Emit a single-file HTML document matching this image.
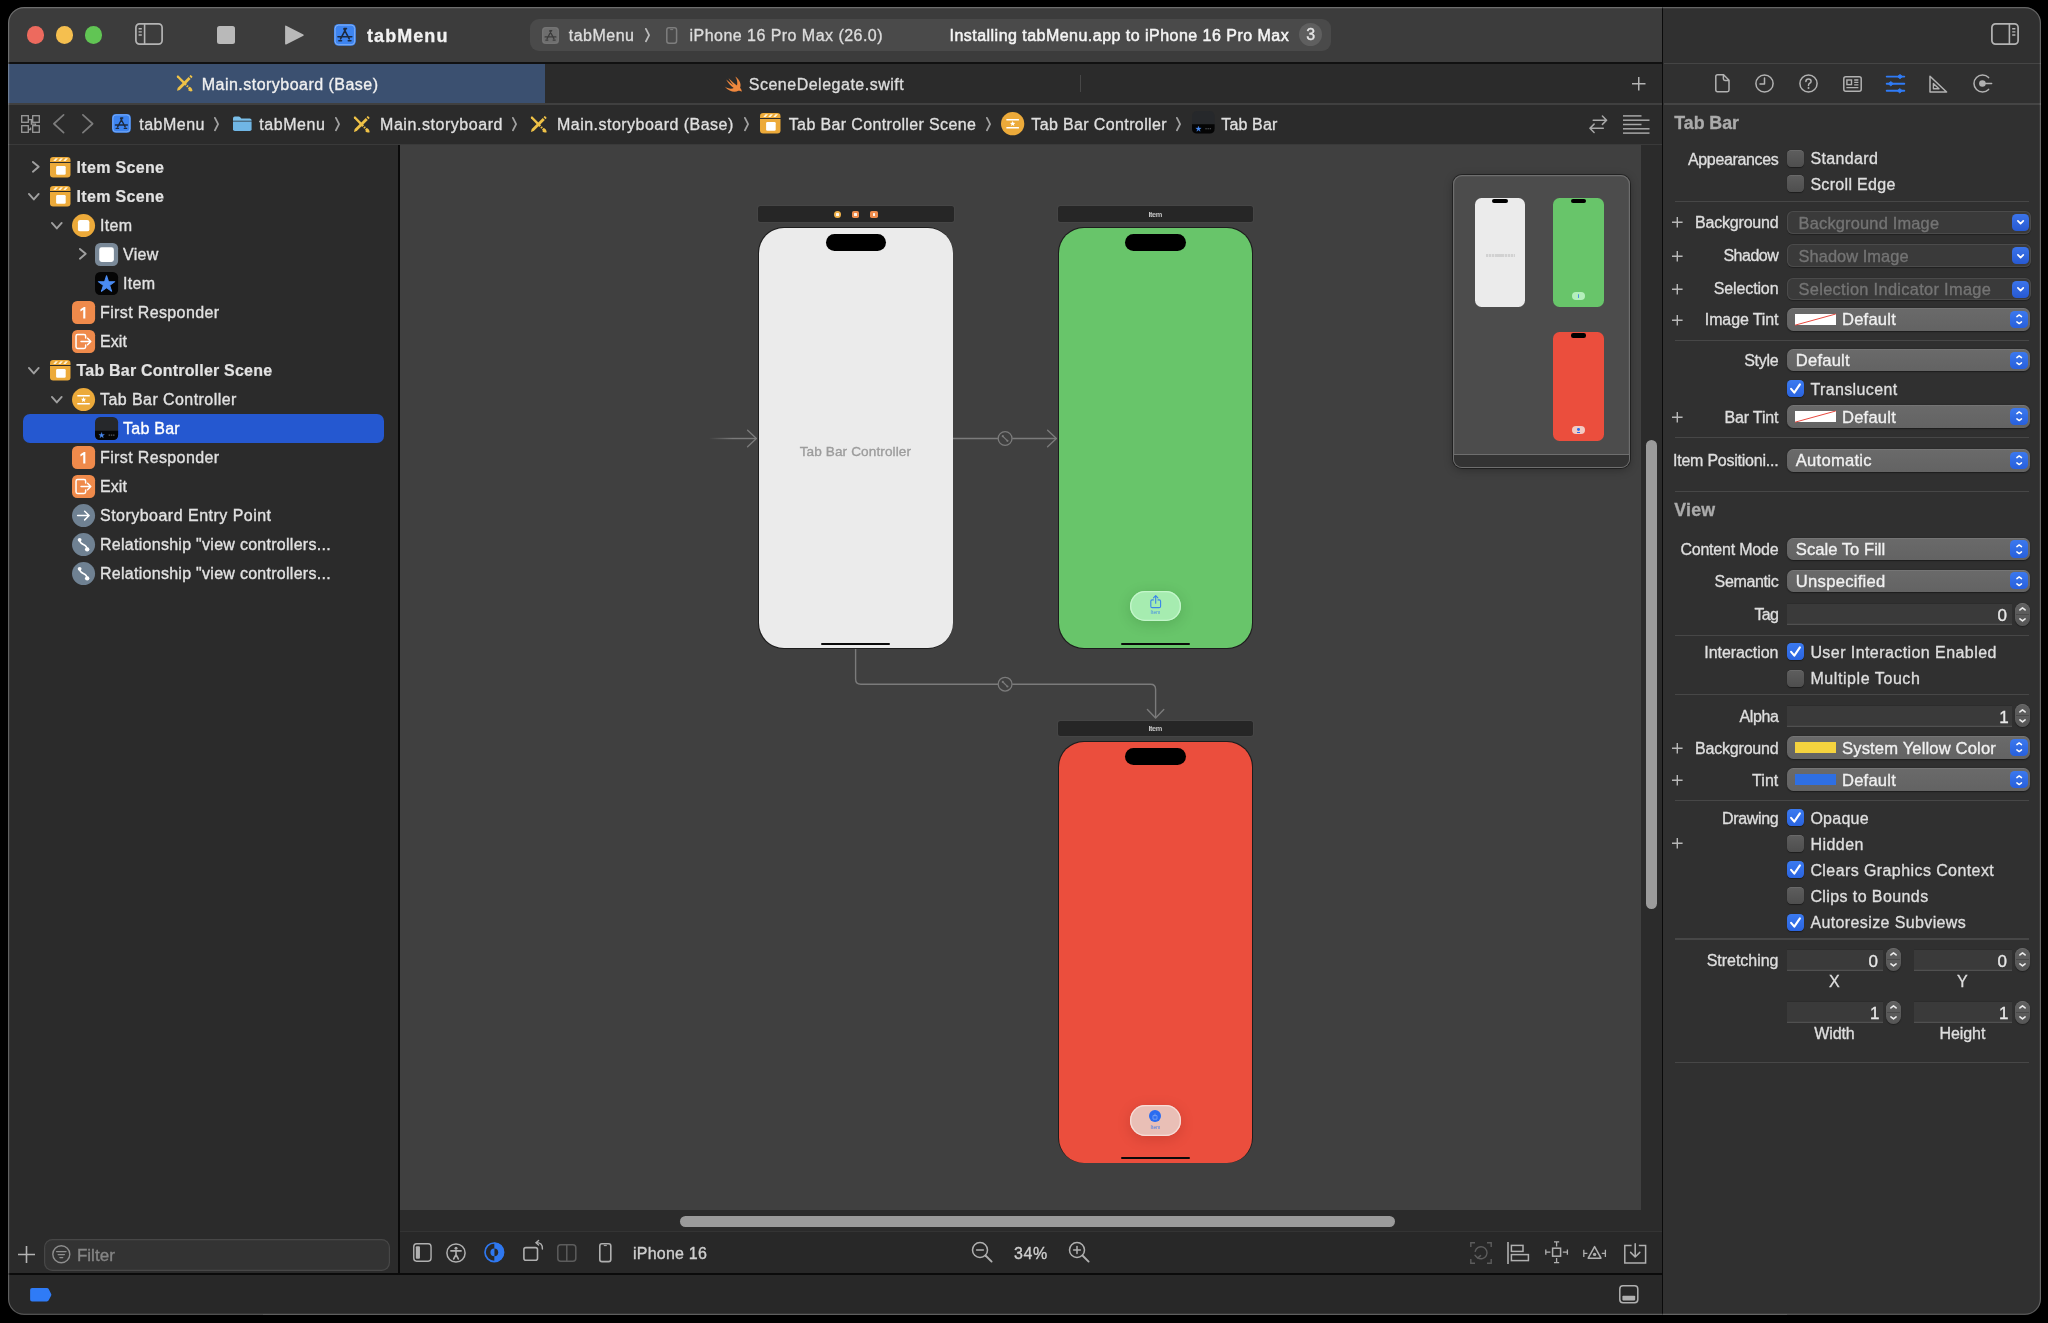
<!DOCTYPE html>
<html><head><meta charset="utf-8"><title>tabMenu — Main.storyboard</title><style>
html,body{margin:0;padding:0;background:#000;}
body{width:2048px;height:1323px;overflow:hidden;position:relative;font-family:"Liberation Sans", sans-serif;}
#win{position:absolute;left:0;top:0;width:2048px;height:1323px;clip-path:inset(7px 7px 8.5px 8px round 16px);will-change:transform;}
.t{position:absolute;white-space:pre;line-height:1;font-family:"Liberation Sans", sans-serif;-webkit-font-smoothing:antialiased;}
svg{position:absolute;overflow:visible;}
</style></head><body>
<div id="win">
<div style="position:absolute;left:0.00px;top:0.00px;width:2048.00px;height:1323.00px;background:#2a2a2a;"></div>
<div style="position:absolute;left:8.00px;top:7.00px;width:1654.00px;height:56.00px;background:#3c3c3c;"></div>
<div style="position:absolute;left:8.00px;top:62.00px;width:1654.00px;height:2.00px;background:#111;"></div>
<div style="position:absolute;left:8.00px;top:64.00px;width:1654.00px;height:39.20px;background:#2b2b2b;"></div>
<div style="position:absolute;left:8.00px;top:64.00px;width:536.50px;height:39.20px;background:#3b5070;"></div>
<div style="position:absolute;left:8.00px;top:103.10px;width:1654.00px;height:1.60px;background:#404040;"></div>
<div style="position:absolute;left:8.00px;top:104.70px;width:1654.00px;height:39.30px;background:#2b2b2b;"></div>
<div style="position:absolute;left:8.00px;top:143.50px;width:1654.00px;height:1.50px;background:#3a3a3a;"></div>
<div style="position:absolute;left:8.00px;top:145.00px;width:391.00px;height:1129.00px;background:#2b2b2b;"></div>
<div style="position:absolute;left:398.20px;top:145.00px;width:1.80px;height:1129.00px;background:#0a0a0a;"></div>
<div style="position:absolute;left:400.00px;top:145.00px;width:1241.00px;height:1065.00px;background:#404040;"></div>
<div style="position:absolute;left:1641.00px;top:145.00px;width:21.00px;height:1087.00px;background:#2b2b2b;"></div>
<div style="position:absolute;left:400.00px;top:1210.00px;width:1262.00px;height:22.00px;background:#2b2b2b;"></div>
<div style="position:absolute;left:400.00px;top:1232.00px;width:1262.00px;height:41.50px;background:#282828;"></div>
<div style="position:absolute;left:400.00px;top:1231.00px;width:1262.00px;height:1.20px;background:#343434;"></div>
<div style="position:absolute;left:8.00px;top:1273.10px;width:1654.00px;height:1.60px;background:#0b0b0b;"></div>
<div style="position:absolute;left:8.00px;top:1274.50px;width:1654.00px;height:41.00px;background:#282828;"></div>
<div style="position:absolute;left:1661.90px;top:7.00px;width:1.50px;height:1310.00px;background:#0a0a0a;"></div>
<div style="position:absolute;left:1663.40px;top:7.00px;width:380.00px;height:1310.00px;background:#303030;"></div>
<div style="position:absolute;left:1663.80px;top:63.00px;width:380.00px;height:1.20px;background:#454545;"></div>
<div style="position:absolute;left:1663.80px;top:103.00px;width:380.00px;height:1.50px;background:#454545;"></div>
<div style="position:absolute;left:26.80px;top:25.95px;width:17.60px;height:17.60px;border-radius:50%;background:#ed6a5e;"></div>
<div style="position:absolute;left:55.80px;top:25.95px;width:17.60px;height:17.60px;border-radius:50%;background:#f5bf4f;"></div>
<div style="position:absolute;left:84.80px;top:25.95px;width:17.60px;height:17.60px;border-radius:50%;background:#61c554;"></div>
<svg style="left:135.00px;top:23.20px" width="28.00" height="22.00" viewBox="0 0 28 22" ><rect x="0.9" y="0.9" width="26.2" height="20.2" rx="3.6" fill="none" stroke="#b4b4b4" stroke-width="1.7"/><path d="M9.6 1 V21" stroke="#b4b4b4" stroke-width="1.6"/><path d="M3.6 5.8 H6.8 M3.6 8.9 H6.8 M3.6 12 H6.8" stroke="#b4b4b4" stroke-width="1.4"/></svg>
<div style="position:absolute;left:217.00px;top:26.00px;width:18.00px;height:18.00px;background:#b9b9b9;border-radius:2.5px;"></div>
<svg style="left:284.50px;top:24.70px" width="19.50" height="20.20" viewBox="0 0 19.5 20.2" ><path d="M0.1 1.4 Q0.1 0.2 1.2 0.8 L18.4 9.4 Q19.2 10.1 18.4 10.8 L1.2 19.4 Q0.1 20 0.1 18.8 Z" fill="#b9b9b9"/></svg>
<svg style="left:334.00px;top:24.00px" width="21.80" height="21.80" viewBox="0 0 22 22" ><rect x="0" y="0" width="22" height="22" rx="4.6" fill="#3d84f0"/><rect x="1.1" y="1.1" width="19.8" height="19.8" rx="3.6" fill="none" stroke="#8bb7f7" stroke-width="0.9"/><path d="M12 5 L6.6 15 M10 5 L15.4 15 M10.2 4.6 H12.6 M4 12.9 H18 M4.9 16.9 H7.6 M14.4 16.9 H17.1" fill="none" stroke="#1d2a3f" stroke-width="1.6" stroke-linecap="round"/></svg>
<span class="t" style="top:26.96px;font-size:18px;font-weight:700;color:#f2f2f2;letter-spacing:1.071px;-webkit-text-stroke:0.3px currentColor;left:367.00px;">tabMenu</span>
<div style="position:absolute;left:529.50px;top:18.75px;width:801.00px;height:32.50px;background:#4a4a4a;border-radius:9px;"></div>
<svg style="left:542.00px;top:27.00px" width="17.00" height="17.00" viewBox="0 0 22 22" ><rect x="0" y="0" width="22" height="22" rx="4.6" fill="#6e6e6e"/><rect x="1.1" y="1.1" width="19.8" height="19.8" rx="3.6" fill="none" stroke="#7c7c7c" stroke-width="0.9"/><path d="M12 5 L6.6 15 M10 5 L15.4 15 M10.2 4.6 H12.6 M4 12.9 H18 M4.9 16.9 H7.6 M14.4 16.9 H17.1" fill="none" stroke="#3c3c3c" stroke-width="1.6" stroke-linecap="round"/></svg>
<span class="t" style="top:28.23px;font-size:16px;font-weight:400;color:#dcdcdc;letter-spacing:0.498px;-webkit-text-stroke:0.34px currentColor;left:568.75px;">tabMenu</span>
<svg style="left:644.50px;top:28.20px" width="5.00" height="14.20" viewBox="0 0 5 14.2" ><path d="M0.9 0.9 L4.1 7.1 L0.9 13.299999999999999" fill="none" stroke="#bdbdbd" stroke-width="1.8" stroke-linecap="round" stroke-linejoin="round"/></svg>
<svg style="left:666.20px;top:27.00px" width="11.40" height="17.00" viewBox="0 0 11.4 17" ><rect x="0.8" y="0.8" width="9.8" height="15.4" rx="2.2" fill="none" stroke="#7e7e7e" stroke-width="1.5"/><path d="M4.2 2.6 H7.2" stroke="#7e7e7e" stroke-width="1"/></svg>
<span class="t" style="top:28.23px;font-size:16px;font-weight:400;color:#dcdcdc;letter-spacing:0.465px;-webkit-text-stroke:0.34px currentColor;left:689.50px;">iPhone 16 Pro Max (26.0)</span>
<span class="t" style="top:28.23px;font-size:16px;font-weight:400;color:#f4f4f4;letter-spacing:0.472px;-webkit-text-stroke:0.5px currentColor;left:949.50px;">Installing tabMenu.app to iPhone 16 Pro Max</span>
<div style="position:absolute;left:1299.00px;top:23.00px;width:23.00px;height:23.00px;background:#5f5f5f;border-radius:50%;"></div>
<span class="t" style="top:26.93px;font-size:16px;font-weight:400;color:#e6e6e6;letter-spacing:-0.006px;-webkit-text-stroke:0.34px currentColor;left:1306.25px;">3</span>
<svg style="left:1990.70px;top:23.20px" width="28.00" height="22.00" viewBox="0 0 28 22" ><rect x="0.9" y="0.9" width="26.2" height="20.2" rx="3.6" fill="none" stroke="#b4b4b4" stroke-width="1.7"/><path d="M18.4 1 V21" stroke="#b4b4b4" stroke-width="1.6"/><path d="M21.2 5.8 H24.4 M21.2 8.9 H24.4 M21.2 12 H24.4" stroke="#b4b4b4" stroke-width="1.4"/></svg>
<svg style="left:175.90px;top:75.40px" width="16.60" height="16.60" viewBox="0 0 17 17" ><path d="M1 16.2 L1.7 13.2 L12.9 2 L15 4.1 L3.8 15.3 Z" fill="#efc247"/><path d="M13.7 1.2 L14.6 0.3 Q15.1 -0.1 15.6 0.4 L16.6 1.4 Q17.1 1.9 16.6 2.4 L15.8 3.3 Z" fill="#efc247"/><path d="M1.2 0.7 Q1.9 0 2.7 0.7 L11.2 9.3 L9.4 11.1 L1 2.3 Q0.4 1.5 1.2 0.7 Z" fill="#efc247"/><path d="M10.4 11.9 L12 10.3 L13 11.3 L11.4 12.9 Z" fill="#efc247"/><path d="M12.2 13.6 L13.7 12.1 Q16.6 13 16.9 16.4 Q14.9 17.4 12.6 16 Q13.6 15.2 12.2 13.6 Z" fill="#efc247"/></svg>
<span class="t" style="top:76.63px;font-size:16px;font-weight:400;color:#f0f0f0;letter-spacing:0.475px;-webkit-text-stroke:0.34px currentColor;left:201.75px;">Main.storyboard (Base)</span>
<svg style="left:723.60px;top:75.60px" width="18.60" height="16.53" viewBox="0 0 18 16" ><path d="M10.9 0.6 C15.6 3.6 16.9 8.6 15.6 11.4 C16.9 12.9 17.5 14.6 16.9 15.3 C16 14.2 14.9 14 13.9 14.4 C10.6 16.2 5.3 15.6 0.6 10.2 C3.6 12.2 6.9 12.9 9.4 11.7 C6.4 9.4 3.9 6.6 2.1 3.4 C4.5 5.6 6.9 7.4 9.2 8.9 C7.2 6.7 5.6 4.4 4.4 2.2 C7.3 5 10 7.4 12.6 9.2 C13.3 6.6 12.8 3.4 10.9 0.6 Z" fill="#f0883e"/></svg>
<span class="t" style="top:76.63px;font-size:16px;font-weight:400;color:#dcdcdc;letter-spacing:0.507px;-webkit-text-stroke:0.34px currentColor;left:748.75px;">SceneDelegate.swift</span>
<div style="position:absolute;left:1079.60px;top:75.00px;width:1.20px;height:16.50px;background:#474747;"></div>
<svg style="left:1631.75px;top:76.75px" width="13.50" height="13.50" viewBox="0 0 13.5 13.5" ><path d="M6.75 0 V13.5 M0 6.75 H13.5" fill="none" stroke="#b4b4b4" stroke-width="1.5"/></svg>
<svg style="left:21.00px;top:115.00px" width="19.00" height="18.00" viewBox="0 0 19 18" ><g fill="none" stroke="#9a9a9a" stroke-width="1.3"><rect x="0.7" y="0.7" width="6.6" height="6.6"/><rect x="11.7" y="0.7" width="6.6" height="6.6"/><rect x="0.7" y="10.7" width="6.6" height="6.6"/><rect x="11.7" y="10.7" width="6.6" height="6.6"/><path d="M7.3 4.6 H10.4 V9.2 H14.5 V10.7 M11.7 4.6 H9.6 M7.3 14.5 H9.6 V12.4"/></g></svg>
<svg style="left:52.75px;top:114.25px" width="11.50" height="19.50" viewBox="0 0 11.5 19.5" ><path d="M10.6 0.9 L0.9 9.75 L10.6 18.6" fill="none" stroke="#7c7c7c" stroke-width="1.7" stroke-linecap="round" stroke-linejoin="round"/></svg>
<svg style="left:82.25px;top:114.25px" width="11.50" height="19.50" viewBox="0 0 11.5 19.5" ><path d="M0.9 0.9 L10.6 9.75 L0.9 18.6" fill="none" stroke="#7c7c7c" stroke-width="1.7" stroke-linecap="round" stroke-linejoin="round"/></svg>
<svg style="left:111.75px;top:114.40px" width="18.80" height="18.80" viewBox="0 0 22 22" ><rect x="0" y="0" width="22" height="22" rx="4.6" fill="#3d84f0"/><rect x="1.1" y="1.1" width="19.8" height="19.8" rx="3.6" fill="none" stroke="#8bb7f7" stroke-width="0.9"/><path d="M12 5 L6.6 15 M10 5 L15.4 15 M10.2 4.6 H12.6 M4 12.9 H18 M4.9 16.9 H7.6 M14.4 16.9 H17.1" fill="none" stroke="#1d2a3f" stroke-width="1.6" stroke-linecap="round"/></svg>
<span class="t" style="top:117.03px;font-size:16px;font-weight:400;color:#dfdfdf;letter-spacing:0.498px;-webkit-text-stroke:0.34px currentColor;left:139.25px;">tabMenu</span>
<svg style="left:214.20px;top:117.10px" width="5.00" height="14.20" viewBox="0 0 5 14.2" ><path d="M0.9 0.9 L4.1 7.1 L0.9 13.299999999999999" fill="none" stroke="#a2a2a2" stroke-width="1.8" stroke-linecap="round" stroke-linejoin="round"/></svg>
<svg style="left:232.50px;top:116.20px" width="18.60" height="15.08" viewBox="0 0 18.5 15" ><path d="M0 2.4 Q0 0.6 1.8 0.6 H5.6 Q6.6 0.6 7.2 1.3 L8.2 2.4 H16.6 Q18.5 2.4 18.5 4.2 V4.7 H0 Z" fill="#7abfea"/><path d="M0 5.5 H18.5 V13.2 Q18.5 15 16.7 15 H1.8 Q0 15 0 13.2 Z" fill="#70b6e5"/></svg>
<span class="t" style="top:117.03px;font-size:16px;font-weight:400;color:#dfdfdf;letter-spacing:0.569px;-webkit-text-stroke:0.34px currentColor;left:259.25px;">tabMenu</span>
<svg style="left:335.30px;top:117.10px" width="5.00" height="14.20" viewBox="0 0 5 14.2" ><path d="M0.9 0.9 L4.1 7.1 L0.9 13.299999999999999" fill="none" stroke="#a2a2a2" stroke-width="1.8" stroke-linecap="round" stroke-linejoin="round"/></svg>
<svg style="left:352.90px;top:115.60px" width="16.80" height="16.80" viewBox="0 0 17 17" ><path d="M1 16.2 L1.7 13.2 L12.9 2 L15 4.1 L3.8 15.3 Z" fill="#efc247"/><path d="M13.7 1.2 L14.6 0.3 Q15.1 -0.1 15.6 0.4 L16.6 1.4 Q17.1 1.9 16.6 2.4 L15.8 3.3 Z" fill="#efc247"/><path d="M1.2 0.7 Q1.9 0 2.7 0.7 L11.2 9.3 L9.4 11.1 L1 2.3 Q0.4 1.5 1.2 0.7 Z" fill="#efc247"/><path d="M10.4 11.9 L12 10.3 L13 11.3 L11.4 12.9 Z" fill="#efc247"/><path d="M12.2 13.6 L13.7 12.1 Q16.6 13 16.9 16.4 Q14.9 17.4 12.6 16 Q13.6 15.2 12.2 13.6 Z" fill="#efc247"/></svg>
<span class="t" style="top:117.03px;font-size:16px;font-weight:400;color:#dfdfdf;letter-spacing:0.552px;-webkit-text-stroke:0.34px currentColor;left:380.00px;">Main.storyboard</span>
<svg style="left:512.40px;top:117.10px" width="5.00" height="14.20" viewBox="0 0 5 14.2" ><path d="M0.9 0.9 L4.1 7.1 L0.9 13.299999999999999" fill="none" stroke="#a2a2a2" stroke-width="1.8" stroke-linecap="round" stroke-linejoin="round"/></svg>
<svg style="left:529.90px;top:115.60px" width="16.80" height="16.80" viewBox="0 0 17 17" ><path d="M1 16.2 L1.7 13.2 L12.9 2 L15 4.1 L3.8 15.3 Z" fill="#efc247"/><path d="M13.7 1.2 L14.6 0.3 Q15.1 -0.1 15.6 0.4 L16.6 1.4 Q17.1 1.9 16.6 2.4 L15.8 3.3 Z" fill="#efc247"/><path d="M1.2 0.7 Q1.9 0 2.7 0.7 L11.2 9.3 L9.4 11.1 L1 2.3 Q0.4 1.5 1.2 0.7 Z" fill="#efc247"/><path d="M10.4 11.9 L12 10.3 L13 11.3 L11.4 12.9 Z" fill="#efc247"/><path d="M12.2 13.6 L13.7 12.1 Q16.6 13 16.9 16.4 Q14.9 17.4 12.6 16 Q13.6 15.2 12.2 13.6 Z" fill="#efc247"/></svg>
<span class="t" style="top:117.03px;font-size:16px;font-weight:400;color:#dfdfdf;letter-spacing:0.475px;-webkit-text-stroke:0.34px currentColor;left:557.00px;">Main.storyboard (Base)</span>
<svg style="left:743.70px;top:117.10px" width="5.00" height="14.20" viewBox="0 0 5 14.2" ><path d="M0.9 0.9 L4.1 7.1 L0.9 13.299999999999999" fill="none" stroke="#a2a2a2" stroke-width="1.8" stroke-linecap="round" stroke-linejoin="round"/></svg>
<svg style="left:760.00px;top:113.30px" width="20.50" height="20.40" viewBox="0 0 20.5 20.4" ><path d="M0 3.2 Q0 0 3.2 0 H17.3 Q20.5 0 20.5 3.2 V5 H0 Z" fill="#ecaa3a"/><path d="M0 6.1 H20.5 V17.2 Q20.5 20.4 17.3 20.4 H3.2 Q0 20.4 0 17.2 Z" fill="#ecaa3a"/><path d="M3.2 4 L5.6 1.3 H8 L5.6 4 Z M8.2 4 L10.6 1.3 H13 L10.6 4 Z M13.2 4 L15.6 1.3 H18 L15.6 4 Z" fill="#fff4d8"/><rect x="6.1" y="8.9" width="9.6" height="8.9" rx="1.3" fill="#fff"/></svg>
<span class="t" style="top:117.03px;font-size:16px;font-weight:400;color:#dfdfdf;letter-spacing:0.364px;-webkit-text-stroke:0.34px currentColor;left:788.75px;">Tab Bar Controller Scene</span>
<svg style="left:986.20px;top:117.10px" width="5.00" height="14.20" viewBox="0 0 5 14.2" ><path d="M0.9 0.9 L4.1 7.1 L0.9 13.299999999999999" fill="none" stroke="#a2a2a2" stroke-width="1.8" stroke-linecap="round" stroke-linejoin="round"/></svg>
<svg style="left:1001.20px;top:112.30px" width="23.30" height="23.30" viewBox="0 0 23 23" ><circle cx="11.5" cy="11.5" r="11.5" fill="#ecaa3a"/><path d="M5.3 7.6 H17.7 M5.3 15.6 H17.7" stroke="#fff" stroke-width="1.5" fill="none"/><path d="M11.5 8.9 l0.75 1.75 1.9 0.15 -1.45 1.25 0.45 1.85 -1.65 -1 -1.65 1 0.45 -1.85 -1.45 -1.25 1.9 -0.15z" fill="#fff"/></svg>
<span class="t" style="top:117.03px;font-size:16px;font-weight:400;color:#dfdfdf;letter-spacing:0.378px;-webkit-text-stroke:0.34px currentColor;left:1031.25px;">Tab Bar Controller</span>
<svg style="left:1176.20px;top:117.10px" width="5.00" height="14.20" viewBox="0 0 5 14.2" ><path d="M0.9 0.9 L4.1 7.1 L0.9 13.299999999999999" fill="none" stroke="#a2a2a2" stroke-width="1.8" stroke-linecap="round" stroke-linejoin="round"/></svg>
<svg style="left:1192.00px;top:111.30px" width="22.60" height="22.60" viewBox="0 0 23 23" ><rect width="23" height="23" rx="5.2" fill="#26282b"/><path d="M0 13.6 H23 V17.8 Q23 23 17.8 23 H5.2 Q0 23 0 17.8 Z" fill="#050505"/><path transform="translate(6.6 18.3) scale(2.9)" d="M0 -1 L0.2245 -0.309 L0.951 -0.309 L0.363 0.118 L0.588 0.809 L0 0.382 L-0.588 0.809 L-0.363 0.118 L-0.951 -0.309 L-0.2245 -0.309 Z" fill="#4a8bf2" stroke="#4a8bf2" stroke-width="0.12" stroke-linejoin="round"/><path d="M13.6 18.1 H19.4" stroke="#5a5d62" stroke-width="1.2" stroke-dasharray="1.4 0.8" fill="none"/></svg>
<span class="t" style="top:117.03px;font-size:16px;font-weight:400;color:#dfdfdf;letter-spacing:0.158px;-webkit-text-stroke:0.34px currentColor;left:1221.25px;">Tab Bar</span>
<svg style="left:1589.00px;top:115.00px" width="18.50" height="18.50" viewBox="0 0 18.5 18.5" ><g fill="none" stroke="#a8a8a8" stroke-width="1.5" stroke-linecap="round" stroke-linejoin="round"><path d="M4.2 5.2 H17.4 M13.4 1 L17.6 5.2 L13.4 9.4"/><path d="M14.3 13.3 H1.1 M5.1 9.1 L0.9 13.3 L5.1 17.5"/></g></svg>
<svg style="left:1622.50px;top:114.60px" width="26.50" height="19.00" viewBox="0 0 26.5 19" ><path d="M0 0.9 H18.5" stroke="#a8a8a8" stroke-width="1.5"/><path d="M0 5.2 H26.5" stroke="#a8a8a8" stroke-width="1.5"/><path d="M0 9.5 H18.5" stroke="#a8a8a8" stroke-width="1.5"/><path d="M0 13.8 H26.5" stroke="#a8a8a8" stroke-width="1.5"/><path d="M0 18.1 H26.5" stroke="#a8a8a8" stroke-width="1.5"/></svg>
<div style="position:absolute;left:22.60px;top:414.00px;width:361.60px;height:28.70px;background:#2558d0;border-radius:7px;"></div>
<svg style="left:31.80px;top:161.20px" width="7.60" height="11.60" viewBox="0 0 7.6 11.6" ><path d="M0.9 0.9 L6.699999999999999 5.8 L0.9 10.7" fill="none" stroke="#a0a0a0" stroke-width="1.9" stroke-linecap="round" stroke-linejoin="round"/></svg>
<svg style="left:49.90px;top:156.90px" width="20.50" height="20.40" viewBox="0 0 20.5 20.4" ><path d="M0 3.2 Q0 0 3.2 0 H17.3 Q20.5 0 20.5 3.2 V5 H0 Z" fill="#ecaa3a"/><path d="M0 6.1 H20.5 V17.2 Q20.5 20.4 17.3 20.4 H3.2 Q0 20.4 0 17.2 Z" fill="#ecaa3a"/><path d="M3.2 4 L5.6 1.3 H8 L5.6 4 Z M8.2 4 L10.6 1.3 H13 L10.6 4 Z M13.2 4 L15.6 1.3 H18 L15.6 4 Z" fill="#fff4d8"/><rect x="6.1" y="8.9" width="9.6" height="8.9" rx="1.3" fill="#fff"/></svg>
<span class="t" style="top:160.23px;font-size:16px;font-weight:700;color:#e2e2e2;letter-spacing:0.327px;-webkit-text-stroke:0.2px currentColor;left:76.50px;">Item Scene</span>
<svg style="left:28.40px;top:192.70px" width="11.60" height="7.40" viewBox="0 0 11.6 7.4" ><path d="M0.9 0.9 L5.8 6.5 L10.7 0.9" fill="none" stroke="#a0a0a0" stroke-width="1.9" stroke-linecap="round" stroke-linejoin="round"/></svg>
<svg style="left:49.90px;top:185.90px" width="20.50" height="20.40" viewBox="0 0 20.5 20.4" ><path d="M0 3.2 Q0 0 3.2 0 H17.3 Q20.5 0 20.5 3.2 V5 H0 Z" fill="#ecaa3a"/><path d="M0 6.1 H20.5 V17.2 Q20.5 20.4 17.3 20.4 H3.2 Q0 20.4 0 17.2 Z" fill="#ecaa3a"/><path d="M3.2 4 L5.6 1.3 H8 L5.6 4 Z M8.2 4 L10.6 1.3 H13 L10.6 4 Z M13.2 4 L15.6 1.3 H18 L15.6 4 Z" fill="#fff4d8"/><rect x="6.1" y="8.9" width="9.6" height="8.9" rx="1.3" fill="#fff"/></svg>
<span class="t" style="top:189.23px;font-size:16px;font-weight:700;color:#e2e2e2;letter-spacing:0.327px;-webkit-text-stroke:0.2px currentColor;left:76.50px;">Item Scene</span>
<svg style="left:51.00px;top:221.70px" width="11.60" height="7.40" viewBox="0 0 11.6 7.4" ><path d="M0.9 0.9 L5.8 6.5 L10.7 0.9" fill="none" stroke="#a0a0a0" stroke-width="1.9" stroke-linecap="round" stroke-linejoin="round"/></svg>
<svg style="left:72.00px;top:214.05px" width="23.10" height="23.10" viewBox="0 0 23 23" ><circle cx="11.5" cy="11.5" r="11.5" fill="#ecaa3a"/><rect x="5.9" y="5.9" width="11.4" height="11.4" rx="2.2" fill="#fff"/></svg>
<span class="t" style="top:218.23px;font-size:16px;font-weight:400;color:#e2e2e2;letter-spacing:0.319px;-webkit-text-stroke:0.34px currentColor;left:100.00px;">Item</span>
<svg style="left:79.10px;top:248.20px" width="7.60" height="11.60" viewBox="0 0 7.6 11.6" ><path d="M0.9 0.9 L6.699999999999999 5.8 L0.9 10.7" fill="none" stroke="#a0a0a0" stroke-width="1.9" stroke-linecap="round" stroke-linejoin="round"/></svg>
<svg style="left:95.00px;top:243.05px" width="23.10" height="23.10" viewBox="0 0 23 23" ><rect x="0" y="0" width="23" height="23" rx="5.2" fill="#7a8998"/><rect x="4.2" y="4.2" width="14.6" height="14.6" rx="2.4" fill="#fff"/></svg>
<span class="t" style="top:247.23px;font-size:16px;font-weight:400;color:#e2e2e2;letter-spacing:0.277px;-webkit-text-stroke:0.34px currentColor;left:123.00px;">View</span>
<svg style="left:95.00px;top:272.05px" width="23.10" height="23.10" viewBox="0 0 23 23" ><rect width="23" height="23" rx="5.2" fill="#050505"/><path transform="translate(11.5 12.3) scale(8.6)" d="M0 -1 L0.2245 -0.309 L0.951 -0.309 L0.363 0.118 L0.588 0.809 L0 0.382 L-0.588 0.809 L-0.363 0.118 L-0.951 -0.309 L-0.2245 -0.309 Z" fill="#4a8bf2" stroke="#4a8bf2" stroke-width="0.12" stroke-linejoin="round"/></svg>
<span class="t" style="top:276.23px;font-size:16px;font-weight:400;color:#e2e2e2;letter-spacing:0.319px;-webkit-text-stroke:0.34px currentColor;left:123.00px;">Item</span>
<svg style="left:72.00px;top:301.05px" width="23.10" height="23.10" viewBox="0 0 23 23" ><rect width="23" height="23" rx="5.2" fill="#ef8a4b"/><path d="M8.4 8.3 L11.9 5.9 H13.3 V17.4 H11.2 V8.6 L8.4 10.4 Z" fill="#fff"/></svg>
<span class="t" style="top:305.23px;font-size:16px;font-weight:400;color:#e2e2e2;letter-spacing:0.371px;-webkit-text-stroke:0.34px currentColor;left:100.00px;">First Responder</span>
<svg style="left:72.00px;top:330.05px" width="23.10" height="23.10" viewBox="0 0 23 23" ><rect width="23" height="23" rx="5.2" fill="#ef8a4b"/><path d="M13.6 8 V6.2 Q13.6 4.6 12 4.6 H5.6 Q4 4.6 4 6.2 V16.8 Q4 18.4 5.6 18.4 H12 Q13.6 18.4 13.6 16.8 V15" fill="none" stroke="#fff" stroke-width="1.5" stroke-linecap="round"/><path d="M9 11.5 H18.6 M15.5 8.3 L18.7 11.5 L15.5 14.7" fill="none" stroke="#fff" stroke-width="1.5" stroke-linecap="round" stroke-linejoin="round"/></svg>
<span class="t" style="top:334.23px;font-size:16px;font-weight:400;color:#e2e2e2;letter-spacing:0.057px;-webkit-text-stroke:0.34px currentColor;left:100.00px;">Exit</span>
<svg style="left:28.40px;top:366.70px" width="11.60" height="7.40" viewBox="0 0 11.6 7.4" ><path d="M0.9 0.9 L5.8 6.5 L10.7 0.9" fill="none" stroke="#a0a0a0" stroke-width="1.9" stroke-linecap="round" stroke-linejoin="round"/></svg>
<svg style="left:49.90px;top:359.90px" width="20.50" height="20.40" viewBox="0 0 20.5 20.4" ><path d="M0 3.2 Q0 0 3.2 0 H17.3 Q20.5 0 20.5 3.2 V5 H0 Z" fill="#ecaa3a"/><path d="M0 6.1 H20.5 V17.2 Q20.5 20.4 17.3 20.4 H3.2 Q0 20.4 0 17.2 Z" fill="#ecaa3a"/><path d="M3.2 4 L5.6 1.3 H8 L5.6 4 Z M8.2 4 L10.6 1.3 H13 L10.6 4 Z M13.2 4 L15.6 1.3 H18 L15.6 4 Z" fill="#fff4d8"/><rect x="6.1" y="8.9" width="9.6" height="8.9" rx="1.3" fill="#fff"/></svg>
<span class="t" style="top:363.23px;font-size:16px;font-weight:700;color:#e2e2e2;letter-spacing:0.204px;-webkit-text-stroke:0.2px currentColor;left:76.50px;">Tab Bar Controller Scene</span>
<svg style="left:51.00px;top:395.70px" width="11.60" height="7.40" viewBox="0 0 11.6 7.4" ><path d="M0.9 0.9 L5.8 6.5 L10.7 0.9" fill="none" stroke="#a0a0a0" stroke-width="1.9" stroke-linecap="round" stroke-linejoin="round"/></svg>
<svg style="left:72.00px;top:388.05px" width="23.10" height="23.10" viewBox="0 0 23 23" ><circle cx="11.5" cy="11.5" r="11.5" fill="#ecaa3a"/><path d="M5.3 7.6 H17.7 M5.3 15.6 H17.7" stroke="#fff" stroke-width="1.5" fill="none"/><path d="M11.5 8.9 l0.75 1.75 1.9 0.15 -1.45 1.25 0.45 1.85 -1.65 -1 -1.65 1 0.45 -1.85 -1.45 -1.25 1.9 -0.15z" fill="#fff"/></svg>
<span class="t" style="top:392.23px;font-size:16px;font-weight:400;color:#e2e2e2;letter-spacing:0.433px;-webkit-text-stroke:0.34px currentColor;left:100.00px;">Tab Bar Controller</span>
<svg style="left:95.00px;top:417.05px" width="23.10" height="23.10" viewBox="0 0 23 23" ><rect width="23" height="23" rx="5.2" fill="#26282b"/><path d="M0 13.6 H23 V17.8 Q23 23 17.8 23 H5.2 Q0 23 0 17.8 Z" fill="#050505"/><path transform="translate(6.6 18.3) scale(2.9)" d="M0 -1 L0.2245 -0.309 L0.951 -0.309 L0.363 0.118 L0.588 0.809 L0 0.382 L-0.588 0.809 L-0.363 0.118 L-0.951 -0.309 L-0.2245 -0.309 Z" fill="#4a8bf2" stroke="#4a8bf2" stroke-width="0.12" stroke-linejoin="round"/><path d="M13.6 18.1 H19.4" stroke="#5a5d62" stroke-width="1.2" stroke-dasharray="1.4 0.8" fill="none"/></svg>
<span class="t" style="top:421.23px;font-size:16px;font-weight:400;color:#ffffff;letter-spacing:0.251px;-webkit-text-stroke:0.34px currentColor;left:123.00px;">Tab Bar</span>
<svg style="left:72.00px;top:446.05px" width="23.10" height="23.10" viewBox="0 0 23 23" ><rect width="23" height="23" rx="5.2" fill="#ef8a4b"/><path d="M8.4 8.3 L11.9 5.9 H13.3 V17.4 H11.2 V8.6 L8.4 10.4 Z" fill="#fff"/></svg>
<span class="t" style="top:450.23px;font-size:16px;font-weight:400;color:#e2e2e2;letter-spacing:0.371px;-webkit-text-stroke:0.34px currentColor;left:100.00px;">First Responder</span>
<svg style="left:72.00px;top:475.05px" width="23.10" height="23.10" viewBox="0 0 23 23" ><rect width="23" height="23" rx="5.2" fill="#ef8a4b"/><path d="M13.6 8 V6.2 Q13.6 4.6 12 4.6 H5.6 Q4 4.6 4 6.2 V16.8 Q4 18.4 5.6 18.4 H12 Q13.6 18.4 13.6 16.8 V15" fill="none" stroke="#fff" stroke-width="1.5" stroke-linecap="round"/><path d="M9 11.5 H18.6 M15.5 8.3 L18.7 11.5 L15.5 14.7" fill="none" stroke="#fff" stroke-width="1.5" stroke-linecap="round" stroke-linejoin="round"/></svg>
<span class="t" style="top:479.23px;font-size:16px;font-weight:400;color:#e2e2e2;letter-spacing:0.057px;-webkit-text-stroke:0.34px currentColor;left:100.00px;">Exit</span>
<svg style="left:72.00px;top:504.05px" width="23.10" height="23.10" viewBox="0 0 23 23" ><circle cx="11.5" cy="11.5" r="11.5" fill="#6f8192"/><path d="M5.6 11.5 H16.8 M12.6 7.2 L17 11.5 L12.6 15.8" fill="none" stroke="#fff" stroke-width="1.5" stroke-linecap="round" stroke-linejoin="round"/></svg>
<span class="t" style="top:508.23px;font-size:16px;font-weight:400;color:#e2e2e2;letter-spacing:0.479px;-webkit-text-stroke:0.34px currentColor;left:100.00px;">Storyboard Entry Point</span>
<svg style="left:72.00px;top:533.05px" width="23.10" height="23.10" viewBox="0 0 23 23" ><circle cx="11.5" cy="11.5" r="11.5" fill="#6f8192"/><path d="M7.6 7 C7.6 12.6 15 10.4 15 16.2" fill="none" stroke="#fff" stroke-width="1.5"/><circle cx="7.6" cy="6.8" r="1.9" fill="#fff"/><circle cx="15.1" cy="16.3" r="2.2" fill="#fff"/></svg>
<span class="t" style="top:537.23px;font-size:16px;font-weight:400;color:#e2e2e2;letter-spacing:0.276px;-webkit-text-stroke:0.34px currentColor;left:100.00px;">Relationship "view controllers...</span>
<svg style="left:72.00px;top:562.05px" width="23.10" height="23.10" viewBox="0 0 23 23" ><circle cx="11.5" cy="11.5" r="11.5" fill="#6f8192"/><path d="M7.6 7 C7.6 12.6 15 10.4 15 16.2" fill="none" stroke="#fff" stroke-width="1.5"/><circle cx="7.6" cy="6.8" r="1.9" fill="#fff"/><circle cx="15.1" cy="16.3" r="2.2" fill="#fff"/></svg>
<span class="t" style="top:566.23px;font-size:16px;font-weight:400;color:#e2e2e2;letter-spacing:0.276px;-webkit-text-stroke:0.34px currentColor;left:100.00px;">Relationship "view controllers...</span>
<svg style="left:18.00px;top:1245.70px" width="17.00" height="17.00" viewBox="0 0 17 17" ><path d="M8.5 0 V17 M0 8.5 H17" fill="none" stroke="#b4b4b4" stroke-width="1.6"/></svg>
<div style="position:absolute;left:44.40px;top:1238.80px;width:345.20px;height:31.80px;background:#333333;border-radius:8.5px;box-shadow:inset 0 0 0 1.2px #474747;"></div>
<svg style="left:51.50px;top:1245.30px" width="18.60" height="18.60" viewBox="0 0 18.6 18.6" ><circle cx="9.3" cy="9.3" r="8.5" fill="none" stroke="#8e8e8e" stroke-width="1.4"/><path d="M4.6 6.6 H14 M6.2 9.6 H12.4 M7.9 12.6 H10.7" stroke="#8e8e8e" stroke-width="1.4" stroke-linecap="round"/></svg>
<span class="t" style="top:1247.15px;font-size:17px;font-weight:400;color:#858585;letter-spacing:0.036px;-webkit-text-stroke:0.34px currentColor;left:76.90px;">Filter</span>
<svg style="left:1714.80px;top:74.35px" width="14.80" height="18.50" viewBox="0 0 14.8 18.5" ><path d="M2.6 0.8 H8.6 L14 6.2 V16 Q14 17.7 12.3 17.7 H2.6 Q0.8 17.7 0.8 16 V2.6 Q0.8 0.8 2.6 0.8 Z M8.4 1 V4.8 Q8.4 6.4 10 6.4 H13.8" fill="none" stroke="#b2b2b2" stroke-width="1.5" stroke-linejoin="round"/></svg>
<svg style="left:1755.25px;top:74.10px" width="19.00" height="19.00" viewBox="0 0 19 19" ><circle cx="9.5" cy="9.5" r="8.6" fill="none" stroke="#b2b2b2" stroke-width="1.5"/><path d="M9.5 4 V9.9 H5" fill="none" stroke="#b2b2b2" stroke-width="1.5" stroke-linecap="round" stroke-linejoin="round"/></svg>
<svg style="left:1799.00px;top:74.10px" width="19.00" height="19.00" viewBox="0 0 19 19" ><circle cx="9.5" cy="9.5" r="8.6" fill="none" stroke="#b2b2b2" stroke-width="1.5"/><path d="M6.9 7.4 Q6.9 4.9 9.5 4.9 Q12.1 4.9 12.1 7.2 Q12.1 8.6 10.6 9.4 Q9.5 10 9.5 11.4" fill="none" stroke="#b2b2b2" stroke-width="1.5" stroke-linecap="round"/><circle cx="9.5" cy="14" r="1" fill="#b2b2b2"/></svg>
<svg style="left:1842.50px;top:75.60px" width="19.00" height="16.00" viewBox="0 0 19 16" ><rect x="0.8" y="0.8" width="17.4" height="14.4" rx="2" fill="none" stroke="#b2b2b2" stroke-width="1.5"/><rect x="3.9" y="4" width="4.6" height="4.6" fill="none" stroke="#b2b2b2" stroke-width="1.4"/><path d="M11.2 4 H15.4 M11.2 6.4 H15.4 M11.2 8.8 H15.4 M3.4 11.7 H15.4" stroke="#b2b2b2" stroke-width="1.3"/></svg>
<svg style="left:1886.00px;top:73.90px" width="19.00" height="19.40" viewBox="0 0 19 19.4" ><path d="M0.7 2.6 H18.3 M0.7 9.7 H18.3 M0.7 16.8 H18.3" stroke="#2f7bf6" stroke-width="1.9" stroke-linecap="round"/><path d="M11.4 2.6 L14 0.4 L16.6 2.6 L14 4.8 Z M2.2 9.7 L4.8 7.5 L7.4 9.7 L4.8 11.9 Z M11.2 16.8 L13.8 14.6 L16.4 16.8 L13.8 19 Z" fill="#2f7bf6" stroke="#2f7bf6" stroke-width="0.8" stroke-linejoin="round"/></svg>
<svg style="left:1929.20px;top:75.00px" width="18.60" height="18.00" viewBox="0 0 18.6 18" ><path d="M1 1.2 V17 H17.6 Z" fill="none" stroke="#b2b2b2" stroke-width="1.5" stroke-linejoin="round"/><path d="M4.4 8.6 V13.8 H10 Z" fill="none" stroke="#b2b2b2" stroke-width="1.4" stroke-linejoin="round"/></svg>
<svg style="left:1973.10px;top:74.10px" width="19.00" height="19.00" viewBox="0 0 19 19" ><path d="M15.6 3.6 A8.5 8.5 0 1 0 15.6 15.4" fill="none" stroke="#b2b2b2" stroke-width="1.5" stroke-linecap="round"/><circle cx="9.4" cy="9.5" r="3.3" fill="#b2b2b2"/><path d="M12 9.5 H18.6" stroke="#b2b2b2" stroke-width="1.5" stroke-linecap="round"/></svg>
<span class="t" style="top:114.55px;font-size:17.8px;font-weight:700;color:#ababab;letter-spacing:-0.042px;-webkit-text-stroke:0.3px currentColor;left:1674.30px;">Tab Bar</span>
<span class="t" style="top:151.83px;font-size:16px;font-weight:400;color:#dedede;letter-spacing:-0.354px;-webkit-text-stroke:0.34px currentColor;left:1688.00px;">Appearances</span>
<div style="position:absolute;left:1786.80px;top:149.70px;width:17.00px;height:17.00px;border-radius:4.2px;background:linear-gradient(#5e5e5e,#4e4e4e);box-shadow:0 0.6px 1px rgba(0,0,0,.4), inset 0 0.8px 0 rgba(255,255,255,.10);"></div><span class="t" style="top:151.23px;font-size:16px;font-weight:400;color:#dedede;letter-spacing:0.358px;-webkit-text-stroke:0.34px currentColor;left:1810.40px;">Standard</span>
<div style="position:absolute;left:1786.80px;top:175.20px;width:17.00px;height:17.00px;border-radius:4.2px;background:linear-gradient(#5e5e5e,#4e4e4e);box-shadow:0 0.6px 1px rgba(0,0,0,.4), inset 0 0.8px 0 rgba(255,255,255,.10);"></div><span class="t" style="top:176.73px;font-size:16px;font-weight:400;color:#dedede;letter-spacing:0.307px;-webkit-text-stroke:0.34px currentColor;left:1810.40px;">Scroll Edge</span>
<div style="position:absolute;left:1675.20px;top:200.70px;width:353.60px;height:1.30px;background:#474747;"></div>
<svg style="left:1671.70px;top:217.10px" width="10.60" height="10.60" viewBox="0 0 10.6 10.6" ><path d="M5.3 0 V10.6 M0 5.3 H10.6" fill="none" stroke="#b8b8b8" stroke-width="1.4"/></svg>
<span class="t" style="top:214.63px;font-size:16px;font-weight:400;color:#dedede;letter-spacing:-0.209px;-webkit-text-stroke:0.34px currentColor;left:1695.10px;">Background</span>
<div style="position:absolute;left:1786.80px;top:211.00px;width:244.70px;height:22.60px;border-radius:6px;background:#3a3a3a;box-shadow:inset 0 0 0 1.1px #4b4b4b, 0 0.8px 1px rgba(0,0,0,.35);"></div><div style="position:absolute;left:2011.80px;top:213.80px;width:17.40px;height:17.00px;border-radius:4.6px;background:linear-gradient(#3b74ea,#2759d2);"></div><svg style="left:2016.90px;top:220.40px" width="7.20" height="4.60" viewBox="0 0 7.2 4.6" ><path d="M0.9 0.9 L3.6 3.6999999999999997 L6.3 0.9" fill="none" stroke="#fff" stroke-width="1.7" stroke-linecap="round" stroke-linejoin="round"/></svg><span class="t" style="top:214.54px;font-size:16.4px;font-weight:400;color:#747474;letter-spacing:0.188px;-webkit-text-stroke:0.34px currentColor;left:1798.60px;">Background Image</span>
<svg style="left:1671.70px;top:250.50px" width="10.60" height="10.60" viewBox="0 0 10.6 10.6" ><path d="M5.3 0 V10.6 M0 5.3 H10.6" fill="none" stroke="#b8b8b8" stroke-width="1.4"/></svg>
<span class="t" style="top:248.03px;font-size:16px;font-weight:400;color:#dedede;letter-spacing:-0.471px;-webkit-text-stroke:0.34px currentColor;left:1723.40px;">Shadow</span>
<div style="position:absolute;left:1786.80px;top:244.20px;width:244.70px;height:22.60px;border-radius:6px;background:#3a3a3a;box-shadow:inset 0 0 0 1.1px #4b4b4b, 0 0.8px 1px rgba(0,0,0,.35);"></div><div style="position:absolute;left:2011.80px;top:247.00px;width:17.40px;height:17.00px;border-radius:4.6px;background:linear-gradient(#3b74ea,#2759d2);"></div><svg style="left:2016.90px;top:253.60px" width="7.20" height="4.60" viewBox="0 0 7.2 4.6" ><path d="M0.9 0.9 L3.6 3.6999999999999997 L6.3 0.9" fill="none" stroke="#fff" stroke-width="1.7" stroke-linecap="round" stroke-linejoin="round"/></svg><span class="t" style="top:247.74px;font-size:16.4px;font-weight:400;color:#747474;letter-spacing:0.055px;-webkit-text-stroke:0.34px currentColor;left:1798.60px;">Shadow Image</span>
<svg style="left:1671.70px;top:283.90px" width="10.60" height="10.60" viewBox="0 0 10.6 10.6" ><path d="M5.3 0 V10.6 M0 5.3 H10.6" fill="none" stroke="#b8b8b8" stroke-width="1.4"/></svg>
<span class="t" style="top:281.43px;font-size:16px;font-weight:400;color:#dedede;letter-spacing:-0.136px;-webkit-text-stroke:0.34px currentColor;left:1713.80px;">Selection</span>
<div style="position:absolute;left:1786.80px;top:277.70px;width:244.70px;height:22.60px;border-radius:6px;background:#3a3a3a;box-shadow:inset 0 0 0 1.1px #4b4b4b, 0 0.8px 1px rgba(0,0,0,.35);"></div><div style="position:absolute;left:2011.80px;top:280.50px;width:17.40px;height:17.00px;border-radius:4.6px;background:linear-gradient(#3b74ea,#2759d2);"></div><svg style="left:2016.90px;top:287.10px" width="7.20" height="4.60" viewBox="0 0 7.2 4.6" ><path d="M0.9 0.9 L3.6 3.6999999999999997 L6.3 0.9" fill="none" stroke="#fff" stroke-width="1.7" stroke-linecap="round" stroke-linejoin="round"/></svg><span class="t" style="top:281.24px;font-size:16.4px;font-weight:400;color:#747474;letter-spacing:0.305px;-webkit-text-stroke:0.34px currentColor;left:1798.60px;">Selection Indicator Image</span>
<svg style="left:1671.70px;top:314.70px" width="10.60" height="10.60" viewBox="0 0 10.6 10.6" ><path d="M5.3 0 V10.6 M0 5.3 H10.6" fill="none" stroke="#b8b8b8" stroke-width="1.4"/></svg>
<span class="t" style="top:312.33px;font-size:16px;font-weight:400;color:#dedede;letter-spacing:-0.110px;-webkit-text-stroke:0.34px currentColor;left:1704.80px;">Image Tint</span>
<div style="position:absolute;left:1786.80px;top:308.30px;width:243.40px;height:22.60px;border-radius:6.5px;background:linear-gradient(#6a6a6a,#636363);box-shadow:0 0.8px 1.4px rgba(0,0,0,.45), inset 0 0.8px 0 rgba(255,255,255,.10);"></div><div style="position:absolute;left:2010.40px;top:310.90px;width:17.40px;height:17.40px;border-radius:4.6px;background:linear-gradient(#3b78ee,#2860dc);"></div><svg style="left:2015.90px;top:314.35px" width="6.40" height="3.50" viewBox="0 0 6.4 3.5" ><path d="M0.9 2.6 L3.2 0.9 L5.5 2.6" fill="none" stroke="#fff" stroke-width="1.5" stroke-linecap="round" stroke-linejoin="round"/></svg><svg style="left:2015.90px;top:321.35px" width="6.40" height="3.50" viewBox="0 0 6.4 3.5" ><path d="M0.9 0.9 L3.2 2.6 L5.5 0.9" fill="none" stroke="#fff" stroke-width="1.5" stroke-linecap="round" stroke-linejoin="round"/></svg><div style="position:absolute;left:1795.20px;top:314.00px;width:40.80px;height:11.20px;background:#fff;"></div><svg style="left:1795.20px;top:314.00px" width="40.80" height="11.20" viewBox="0 0 40.8 11.2" ><path d="M0 11.2 L40.8 0" stroke="#e8493f" stroke-width="1"/></svg><span class="t" style="top:312.44px;font-size:16.6px;font-weight:400;color:#f0f0f0;letter-spacing:0.203px;-webkit-text-stroke:0.34px currentColor;left:1842.00px;">Default</span>
<div style="position:absolute;left:1675.20px;top:340.00px;width:353.60px;height:1.30px;background:#474747;"></div>
<span class="t" style="top:352.93px;font-size:16px;font-weight:400;color:#dedede;letter-spacing:-0.276px;-webkit-text-stroke:0.34px currentColor;left:1744.20px;">Style</span>
<div style="position:absolute;left:1786.80px;top:348.90px;width:243.40px;height:22.60px;border-radius:6.5px;background:linear-gradient(#6a6a6a,#636363);box-shadow:0 0.8px 1.4px rgba(0,0,0,.45), inset 0 0.8px 0 rgba(255,255,255,.10);"></div><div style="position:absolute;left:2010.40px;top:351.50px;width:17.40px;height:17.40px;border-radius:4.6px;background:linear-gradient(#3b78ee,#2860dc);"></div><svg style="left:2015.90px;top:354.95px" width="6.40" height="3.50" viewBox="0 0 6.4 3.5" ><path d="M0.9 2.6 L3.2 0.9 L5.5 2.6" fill="none" stroke="#fff" stroke-width="1.5" stroke-linecap="round" stroke-linejoin="round"/></svg><svg style="left:2015.90px;top:361.95px" width="6.40" height="3.50" viewBox="0 0 6.4 3.5" ><path d="M0.9 0.9 L3.2 2.6 L5.5 0.9" fill="none" stroke="#fff" stroke-width="1.5" stroke-linecap="round" stroke-linejoin="round"/></svg><span class="t" style="top:353.04px;font-size:16.6px;font-weight:400;color:#f0f0f0;letter-spacing:0.203px;-webkit-text-stroke:0.34px currentColor;left:1795.80px;">Default</span>
<div style="position:absolute;left:1786.80px;top:380.20px;width:17.00px;height:17.00px;border-radius:4.2px;background:linear-gradient(#3b7af0,#2a64e0);box-shadow:0 0.6px 1px rgba(0,0,0,.4);"></div><svg style="left:1786.80px;top:380.20px" width="17.00" height="17.00" viewBox="0 0 17 17" ><path d="M4.1 8.9 L7.3 12.6 L12.9 4.3" fill="none" stroke="#fff" stroke-width="2.1" stroke-linecap="round" stroke-linejoin="round"/></svg><span class="t" style="top:381.73px;font-size:16px;font-weight:400;color:#dedede;letter-spacing:0.382px;-webkit-text-stroke:0.34px currentColor;left:1810.40px;">Translucent</span>
<svg style="left:1671.70px;top:411.70px" width="10.60" height="10.60" viewBox="0 0 10.6 10.6" ><path d="M5.3 0 V10.6 M0 5.3 H10.6" fill="none" stroke="#b8b8b8" stroke-width="1.4"/></svg>
<span class="t" style="top:409.53px;font-size:16px;font-weight:400;color:#dedede;letter-spacing:-0.143px;-webkit-text-stroke:0.34px currentColor;left:1724.40px;">Bar Tint</span>
<div style="position:absolute;left:1786.80px;top:405.40px;width:243.40px;height:22.60px;border-radius:6.5px;background:linear-gradient(#6a6a6a,#636363);box-shadow:0 0.8px 1.4px rgba(0,0,0,.45), inset 0 0.8px 0 rgba(255,255,255,.10);"></div><div style="position:absolute;left:2010.40px;top:408.00px;width:17.40px;height:17.40px;border-radius:4.6px;background:linear-gradient(#3b78ee,#2860dc);"></div><svg style="left:2015.90px;top:411.45px" width="6.40" height="3.50" viewBox="0 0 6.4 3.5" ><path d="M0.9 2.6 L3.2 0.9 L5.5 2.6" fill="none" stroke="#fff" stroke-width="1.5" stroke-linecap="round" stroke-linejoin="round"/></svg><svg style="left:2015.90px;top:418.45px" width="6.40" height="3.50" viewBox="0 0 6.4 3.5" ><path d="M0.9 0.9 L3.2 2.6 L5.5 0.9" fill="none" stroke="#fff" stroke-width="1.5" stroke-linecap="round" stroke-linejoin="round"/></svg><div style="position:absolute;left:1795.20px;top:411.10px;width:40.80px;height:11.20px;background:#fff;"></div><svg style="left:1795.20px;top:411.10px" width="40.80" height="11.20" viewBox="0 0 40.8 11.2" ><path d="M0 11.2 L40.8 0" stroke="#e8493f" stroke-width="1"/></svg><span class="t" style="top:409.54px;font-size:16.6px;font-weight:400;color:#f0f0f0;letter-spacing:0.203px;-webkit-text-stroke:0.34px currentColor;left:1842.00px;">Default</span>
<div style="position:absolute;left:1675.20px;top:437.20px;width:353.60px;height:1.30px;background:#474747;"></div>
<span class="t" style="top:453.23px;font-size:16px;font-weight:400;color:#dedede;letter-spacing:-0.234px;-webkit-text-stroke:0.34px currentColor;left:1673.00px;">Item Positioni...</span>
<div style="position:absolute;left:1786.80px;top:449.20px;width:243.40px;height:22.60px;border-radius:6.5px;background:linear-gradient(#6a6a6a,#636363);box-shadow:0 0.8px 1.4px rgba(0,0,0,.45), inset 0 0.8px 0 rgba(255,255,255,.10);"></div><div style="position:absolute;left:2010.40px;top:451.80px;width:17.40px;height:17.40px;border-radius:4.6px;background:linear-gradient(#3b78ee,#2860dc);"></div><svg style="left:2015.90px;top:455.25px" width="6.40" height="3.50" viewBox="0 0 6.4 3.5" ><path d="M0.9 2.6 L3.2 0.9 L5.5 2.6" fill="none" stroke="#fff" stroke-width="1.5" stroke-linecap="round" stroke-linejoin="round"/></svg><svg style="left:2015.90px;top:462.25px" width="6.40" height="3.50" viewBox="0 0 6.4 3.5" ><path d="M0.9 0.9 L3.2 2.6 L5.5 0.9" fill="none" stroke="#fff" stroke-width="1.5" stroke-linecap="round" stroke-linejoin="round"/></svg><span class="t" style="top:453.34px;font-size:16.6px;font-weight:400;color:#f0f0f0;letter-spacing:0.247px;-webkit-text-stroke:0.34px currentColor;left:1795.80px;">Automatic</span>
<div style="position:absolute;left:1675.20px;top:491.00px;width:353.60px;height:1.30px;background:#474747;"></div>
<span class="t" style="top:502.15px;font-size:17.8px;font-weight:700;color:#ababab;letter-spacing:0.199px;-webkit-text-stroke:0.3px currentColor;left:1674.30px;">View</span>
<span class="t" style="top:541.83px;font-size:16px;font-weight:400;color:#dedede;letter-spacing:-0.210px;-webkit-text-stroke:0.34px currentColor;left:1680.40px;">Content Mode</span>
<div style="position:absolute;left:1786.80px;top:537.70px;width:243.40px;height:22.60px;border-radius:6.5px;background:linear-gradient(#6a6a6a,#636363);box-shadow:0 0.8px 1.4px rgba(0,0,0,.45), inset 0 0.8px 0 rgba(255,255,255,.10);"></div><div style="position:absolute;left:2010.40px;top:540.30px;width:17.40px;height:17.40px;border-radius:4.6px;background:linear-gradient(#3b78ee,#2860dc);"></div><svg style="left:2015.90px;top:543.75px" width="6.40" height="3.50" viewBox="0 0 6.4 3.5" ><path d="M0.9 2.6 L3.2 0.9 L5.5 2.6" fill="none" stroke="#fff" stroke-width="1.5" stroke-linecap="round" stroke-linejoin="round"/></svg><svg style="left:2015.90px;top:550.75px" width="6.40" height="3.50" viewBox="0 0 6.4 3.5" ><path d="M0.9 0.9 L3.2 2.6 L5.5 0.9" fill="none" stroke="#fff" stroke-width="1.5" stroke-linecap="round" stroke-linejoin="round"/></svg><span class="t" style="top:541.84px;font-size:16.6px;font-weight:400;color:#f0f0f0;letter-spacing:0.026px;-webkit-text-stroke:0.34px currentColor;left:1795.80px;">Scale To Fill</span>
<span class="t" style="top:573.63px;font-size:16px;font-weight:400;color:#dedede;letter-spacing:-0.363px;-webkit-text-stroke:0.34px currentColor;left:1714.60px;">Semantic</span>
<div style="position:absolute;left:1786.80px;top:569.50px;width:243.40px;height:22.60px;border-radius:6.5px;background:linear-gradient(#6a6a6a,#636363);box-shadow:0 0.8px 1.4px rgba(0,0,0,.45), inset 0 0.8px 0 rgba(255,255,255,.10);"></div><div style="position:absolute;left:2010.40px;top:572.10px;width:17.40px;height:17.40px;border-radius:4.6px;background:linear-gradient(#3b78ee,#2860dc);"></div><svg style="left:2015.90px;top:575.55px" width="6.40" height="3.50" viewBox="0 0 6.4 3.5" ><path d="M0.9 2.6 L3.2 0.9 L5.5 2.6" fill="none" stroke="#fff" stroke-width="1.5" stroke-linecap="round" stroke-linejoin="round"/></svg><svg style="left:2015.90px;top:582.55px" width="6.40" height="3.50" viewBox="0 0 6.4 3.5" ><path d="M0.9 0.9 L3.2 2.6 L5.5 0.9" fill="none" stroke="#fff" stroke-width="1.5" stroke-linecap="round" stroke-linejoin="round"/></svg><span class="t" style="top:573.64px;font-size:16.6px;font-weight:400;color:#f0f0f0;letter-spacing:0.280px;-webkit-text-stroke:0.34px currentColor;left:1795.80px;">Unspecified</span>
<span class="t" style="top:607.43px;font-size:16px;font-weight:400;color:#dedede;letter-spacing:-0.599px;-webkit-text-stroke:0.34px currentColor;left:1754.40px;">Tag</span>
<div style="position:absolute;left:1786.80px;top:603.30px;width:225.00px;height:22.20px;background:#3a3a3a;box-shadow:inset 0 1px 0 #2c2c2c, inset 0 -1.2px 0 #505050;"></div><span class="t" style="top:607.25px;font-size:17px;font-weight:400;color:#e8e8e8;letter-spacing:-0.269px;-webkit-text-stroke:0.34px currentColor;left:1997.60px;">0</span>
<div style="position:absolute;left:2015.00px;top:602.80px;width:15.20px;height:23.20px;border-radius:7.6px;background:linear-gradient(#606060,#565656);box-shadow:0 0.8px 1.2px rgba(0,0,0,.45), inset 0 0.8px 0 rgba(255,255,255,.10);"></div><div style="position:absolute;left:2016.00px;top:613.90px;width:13.20px;height:1.00px;background:#4a4a4a;"></div><svg style="left:2019.10px;top:607.10px" width="7.00" height="3.80" viewBox="0 0 7 3.8" ><path d="M0.9 2.9 L3.5 0.9 L6.1 2.9" fill="none" stroke="#ececec" stroke-width="1.6" stroke-linecap="round" stroke-linejoin="round"/></svg><svg style="left:2019.10px;top:617.90px" width="7.00" height="3.80" viewBox="0 0 7 3.8" ><path d="M0.9 0.9 L3.5 2.9 L6.1 0.9" fill="none" stroke="#ececec" stroke-width="1.6" stroke-linecap="round" stroke-linejoin="round"/></svg>
<div style="position:absolute;left:1675.20px;top:634.80px;width:353.60px;height:1.30px;background:#474747;"></div>
<span class="t" style="top:645.23px;font-size:16px;font-weight:400;color:#dedede;letter-spacing:-0.056px;-webkit-text-stroke:0.34px currentColor;left:1704.30px;">Interaction</span>
<div style="position:absolute;left:1786.80px;top:643.10px;width:17.00px;height:17.00px;border-radius:4.2px;background:linear-gradient(#3b7af0,#2a64e0);box-shadow:0 0.6px 1px rgba(0,0,0,.4);"></div><svg style="left:1786.80px;top:643.10px" width="17.00" height="17.00" viewBox="0 0 17 17" ><path d="M4.1 8.9 L7.3 12.6 L12.9 4.3" fill="none" stroke="#fff" stroke-width="2.1" stroke-linecap="round" stroke-linejoin="round"/></svg><span class="t" style="top:644.63px;font-size:16px;font-weight:400;color:#dedede;letter-spacing:0.429px;-webkit-text-stroke:0.34px currentColor;left:1810.40px;">User Interaction Enabled</span>
<div style="position:absolute;left:1786.80px;top:669.50px;width:17.00px;height:17.00px;border-radius:4.2px;background:linear-gradient(#5e5e5e,#4e4e4e);box-shadow:0 0.6px 1px rgba(0,0,0,.4), inset 0 0.8px 0 rgba(255,255,255,.10);"></div><span class="t" style="top:671.03px;font-size:16px;font-weight:400;color:#dedede;letter-spacing:0.573px;-webkit-text-stroke:0.34px currentColor;left:1810.40px;">Multiple Touch</span>
<div style="position:absolute;left:1675.20px;top:694.10px;width:353.60px;height:1.30px;background:#474747;"></div>
<span class="t" style="top:708.63px;font-size:16px;font-weight:400;color:#dedede;letter-spacing:-0.424px;-webkit-text-stroke:0.34px currentColor;left:1739.60px;">Alpha</span>
<div style="position:absolute;left:1786.80px;top:704.60px;width:225.00px;height:22.20px;background:#3a3a3a;box-shadow:inset 0 1px 0 #2c2c2c, inset 0 -1.2px 0 #505050;"></div><span class="t" style="top:708.55px;font-size:17px;font-weight:400;color:#e8e8e8;letter-spacing:-3.269px;-webkit-text-stroke:0.34px currentColor;left:1999.20px;">1</span>
<div style="position:absolute;left:2015.00px;top:704.20px;width:15.20px;height:23.20px;border-radius:7.6px;background:linear-gradient(#606060,#565656);box-shadow:0 0.8px 1.2px rgba(0,0,0,.45), inset 0 0.8px 0 rgba(255,255,255,.10);"></div><div style="position:absolute;left:2016.00px;top:715.30px;width:13.20px;height:1.00px;background:#4a4a4a;"></div><svg style="left:2019.10px;top:708.50px" width="7.00" height="3.80" viewBox="0 0 7 3.8" ><path d="M0.9 2.9 L3.5 0.9 L6.1 2.9" fill="none" stroke="#ececec" stroke-width="1.6" stroke-linecap="round" stroke-linejoin="round"/></svg><svg style="left:2019.10px;top:719.30px" width="7.00" height="3.80" viewBox="0 0 7 3.8" ><path d="M0.9 0.9 L3.5 2.9 L6.1 0.9" fill="none" stroke="#ececec" stroke-width="1.6" stroke-linecap="round" stroke-linejoin="round"/></svg>
<svg style="left:1671.70px;top:742.70px" width="10.60" height="10.60" viewBox="0 0 10.6 10.6" ><path d="M5.3 0 V10.6 M0 5.3 H10.6" fill="none" stroke="#b8b8b8" stroke-width="1.4"/></svg>
<span class="t" style="top:740.53px;font-size:16px;font-weight:400;color:#dedede;letter-spacing:-0.209px;-webkit-text-stroke:0.34px currentColor;left:1695.10px;">Background</span>
<div style="position:absolute;left:1786.80px;top:736.40px;width:243.40px;height:22.60px;border-radius:6.5px;background:linear-gradient(#6a6a6a,#636363);box-shadow:0 0.8px 1.4px rgba(0,0,0,.45), inset 0 0.8px 0 rgba(255,255,255,.10);"></div><div style="position:absolute;left:2010.40px;top:739.00px;width:17.40px;height:17.40px;border-radius:4.6px;background:linear-gradient(#3b78ee,#2860dc);"></div><svg style="left:2015.90px;top:742.45px" width="6.40" height="3.50" viewBox="0 0 6.4 3.5" ><path d="M0.9 2.6 L3.2 0.9 L5.5 2.6" fill="none" stroke="#fff" stroke-width="1.5" stroke-linecap="round" stroke-linejoin="round"/></svg><svg style="left:2015.90px;top:749.45px" width="6.40" height="3.50" viewBox="0 0 6.4 3.5" ><path d="M0.9 0.9 L3.2 2.6 L5.5 0.9" fill="none" stroke="#fff" stroke-width="1.5" stroke-linecap="round" stroke-linejoin="round"/></svg><div style="position:absolute;left:1795.20px;top:742.10px;width:40.80px;height:11.20px;background:#f5d33e;"></div><span class="t" style="top:740.54px;font-size:16.6px;font-weight:400;color:#f0f0f0;letter-spacing:0.144px;-webkit-text-stroke:0.34px currentColor;left:1842.00px;">System Yellow Color</span>
<svg style="left:1671.70px;top:774.70px" width="10.60" height="10.60" viewBox="0 0 10.6 10.6" ><path d="M5.3 0 V10.6 M0 5.3 H10.6" fill="none" stroke="#b8b8b8" stroke-width="1.4"/></svg>
<span class="t" style="top:772.53px;font-size:16px;font-weight:400;color:#dedede;letter-spacing:0.080px;-webkit-text-stroke:0.34px currentColor;left:1752.00px;">Tint</span>
<div style="position:absolute;left:1786.80px;top:768.45px;width:243.40px;height:22.60px;border-radius:6.5px;background:linear-gradient(#6a6a6a,#636363);box-shadow:0 0.8px 1.4px rgba(0,0,0,.45), inset 0 0.8px 0 rgba(255,255,255,.10);"></div><div style="position:absolute;left:2010.40px;top:771.05px;width:17.40px;height:17.40px;border-radius:4.6px;background:linear-gradient(#3b78ee,#2860dc);"></div><svg style="left:2015.90px;top:774.50px" width="6.40" height="3.50" viewBox="0 0 6.4 3.5" ><path d="M0.9 2.6 L3.2 0.9 L5.5 2.6" fill="none" stroke="#fff" stroke-width="1.5" stroke-linecap="round" stroke-linejoin="round"/></svg><svg style="left:2015.90px;top:781.50px" width="6.40" height="3.50" viewBox="0 0 6.4 3.5" ><path d="M0.9 0.9 L3.2 2.6 L5.5 0.9" fill="none" stroke="#fff" stroke-width="1.5" stroke-linecap="round" stroke-linejoin="round"/></svg><div style="position:absolute;left:1795.20px;top:774.15px;width:40.80px;height:11.20px;background:#2f6fe2;"></div><span class="t" style="top:772.59px;font-size:16.6px;font-weight:400;color:#f0f0f0;letter-spacing:0.203px;-webkit-text-stroke:0.34px currentColor;left:1842.00px;">Default</span>
<div style="position:absolute;left:1675.20px;top:800.00px;width:353.60px;height:1.30px;background:#474747;"></div>
<span class="t" style="top:810.63px;font-size:16px;font-weight:400;color:#dedede;letter-spacing:-0.312px;-webkit-text-stroke:0.34px currentColor;left:1721.90px;">Drawing</span>
<div style="position:absolute;left:1786.80px;top:809.00px;width:17.00px;height:17.00px;border-radius:4.2px;background:linear-gradient(#3b7af0,#2a64e0);box-shadow:0 0.6px 1px rgba(0,0,0,.4);"></div><svg style="left:1786.80px;top:809.00px" width="17.00" height="17.00" viewBox="0 0 17 17" ><path d="M4.1 8.9 L7.3 12.6 L12.9 4.3" fill="none" stroke="#fff" stroke-width="2.1" stroke-linecap="round" stroke-linejoin="round"/></svg><span class="t" style="top:810.53px;font-size:16px;font-weight:400;color:#dedede;letter-spacing:0.260px;-webkit-text-stroke:0.34px currentColor;left:1810.40px;">Opaque</span>
<svg style="left:1671.70px;top:838.10px" width="10.60" height="10.60" viewBox="0 0 10.6 10.6" ><path d="M5.3 0 V10.6 M0 5.3 H10.6" fill="none" stroke="#b8b8b8" stroke-width="1.4"/></svg>
<div style="position:absolute;left:1786.80px;top:835.10px;width:17.00px;height:17.00px;border-radius:4.2px;background:linear-gradient(#5e5e5e,#4e4e4e);box-shadow:0 0.6px 1px rgba(0,0,0,.4), inset 0 0.8px 0 rgba(255,255,255,.10);"></div><span class="t" style="top:836.63px;font-size:16px;font-weight:400;color:#dedede;letter-spacing:0.466px;-webkit-text-stroke:0.34px currentColor;left:1810.40px;">Hidden</span>
<div style="position:absolute;left:1786.80px;top:861.30px;width:17.00px;height:17.00px;border-radius:4.2px;background:linear-gradient(#3b7af0,#2a64e0);box-shadow:0 0.6px 1px rgba(0,0,0,.4);"></div><svg style="left:1786.80px;top:861.30px" width="17.00" height="17.00" viewBox="0 0 17 17" ><path d="M4.1 8.9 L7.3 12.6 L12.9 4.3" fill="none" stroke="#fff" stroke-width="2.1" stroke-linecap="round" stroke-linejoin="round"/></svg><span class="t" style="top:862.83px;font-size:16px;font-weight:400;color:#dedede;letter-spacing:0.413px;-webkit-text-stroke:0.34px currentColor;left:1810.40px;">Clears Graphics Context</span>
<div style="position:absolute;left:1786.80px;top:887.40px;width:17.00px;height:17.00px;border-radius:4.2px;background:linear-gradient(#5e5e5e,#4e4e4e);box-shadow:0 0.6px 1px rgba(0,0,0,.4), inset 0 0.8px 0 rgba(255,255,255,.10);"></div><span class="t" style="top:888.93px;font-size:16px;font-weight:400;color:#dedede;letter-spacing:0.409px;-webkit-text-stroke:0.34px currentColor;left:1810.40px;">Clips to Bounds</span>
<div style="position:absolute;left:1786.80px;top:913.60px;width:17.00px;height:17.00px;border-radius:4.2px;background:linear-gradient(#3b7af0,#2a64e0);box-shadow:0 0.6px 1px rgba(0,0,0,.4);"></div><svg style="left:1786.80px;top:913.60px" width="17.00" height="17.00" viewBox="0 0 17 17" ><path d="M4.1 8.9 L7.3 12.6 L12.9 4.3" fill="none" stroke="#fff" stroke-width="2.1" stroke-linecap="round" stroke-linejoin="round"/></svg><span class="t" style="top:915.13px;font-size:16px;font-weight:400;color:#dedede;letter-spacing:0.383px;-webkit-text-stroke:0.34px currentColor;left:1810.40px;">Autoresize Subviews</span>
<div style="position:absolute;left:1675.20px;top:938.40px;width:353.60px;height:1.30px;background:#474747;"></div>
<span class="t" style="top:952.63px;font-size:16px;font-weight:400;color:#dedede;letter-spacing:-0.035px;-webkit-text-stroke:0.34px currentColor;left:1706.70px;">Stretching</span>
<div style="position:absolute;left:1786.80px;top:948.55px;width:95.80px;height:22.20px;background:#3a3a3a;box-shadow:inset 0 1px 0 #2c2c2c, inset 0 -1.2px 0 #505050;"></div><span class="t" style="top:952.50px;font-size:17px;font-weight:400;color:#e8e8e8;letter-spacing:-0.269px;-webkit-text-stroke:0.34px currentColor;left:1868.40px;">0</span>
<div style="position:absolute;left:1885.80px;top:948.15px;width:15.20px;height:23.20px;border-radius:7.6px;background:linear-gradient(#606060,#565656);box-shadow:0 0.8px 1.2px rgba(0,0,0,.45), inset 0 0.8px 0 rgba(255,255,255,.10);"></div><div style="position:absolute;left:1886.80px;top:959.25px;width:13.20px;height:1.00px;background:#4a4a4a;"></div><svg style="left:1889.90px;top:952.45px" width="7.00" height="3.80" viewBox="0 0 7 3.8" ><path d="M0.9 2.9 L3.5 0.9 L6.1 2.9" fill="none" stroke="#ececec" stroke-width="1.6" stroke-linecap="round" stroke-linejoin="round"/></svg><svg style="left:1889.90px;top:963.25px" width="7.00" height="3.80" viewBox="0 0 7 3.8" ><path d="M0.9 0.9 L3.5 2.9 L6.1 0.9" fill="none" stroke="#ececec" stroke-width="1.6" stroke-linecap="round" stroke-linejoin="round"/></svg>
<div style="position:absolute;left:1914.20px;top:948.55px;width:97.40px;height:22.20px;background:#3a3a3a;box-shadow:inset 0 1px 0 #2c2c2c, inset 0 -1.2px 0 #505050;"></div><span class="t" style="top:952.50px;font-size:17px;font-weight:400;color:#e8e8e8;letter-spacing:-0.269px;-webkit-text-stroke:0.34px currentColor;left:1997.40px;">0</span>
<div style="position:absolute;left:2014.90px;top:948.15px;width:15.20px;height:23.20px;border-radius:7.6px;background:linear-gradient(#606060,#565656);box-shadow:0 0.8px 1.2px rgba(0,0,0,.45), inset 0 0.8px 0 rgba(255,255,255,.10);"></div><div style="position:absolute;left:2015.90px;top:959.25px;width:13.20px;height:1.00px;background:#4a4a4a;"></div><svg style="left:2019.00px;top:952.45px" width="7.00" height="3.80" viewBox="0 0 7 3.8" ><path d="M0.9 2.9 L3.5 0.9 L6.1 2.9" fill="none" stroke="#ececec" stroke-width="1.6" stroke-linecap="round" stroke-linejoin="round"/></svg><svg style="left:2019.00px;top:963.25px" width="7.00" height="3.80" viewBox="0 0 7 3.8" ><path d="M0.9 0.9 L3.5 2.9 L6.1 0.9" fill="none" stroke="#ececec" stroke-width="1.6" stroke-linecap="round" stroke-linejoin="round"/></svg>
<span class="t" style="top:974.33px;font-size:16px;font-weight:400;color:#dedede;letter-spacing:-0.072px;-webkit-text-stroke:0.34px currentColor;left:1829.10px;">X</span>
<span class="t" style="top:974.33px;font-size:16px;font-weight:400;color:#dedede;letter-spacing:0.128px;-webkit-text-stroke:0.34px currentColor;left:1957.00px;">Y</span>
<div style="position:absolute;left:1786.80px;top:1000.90px;width:95.80px;height:22.20px;background:#3a3a3a;box-shadow:inset 0 1px 0 #2c2c2c, inset 0 -1.2px 0 #505050;"></div><span class="t" style="top:1004.85px;font-size:17px;font-weight:400;color:#e8e8e8;letter-spacing:-3.269px;-webkit-text-stroke:0.34px currentColor;left:1870.00px;">1</span>
<div style="position:absolute;left:1885.80px;top:1000.50px;width:15.20px;height:23.20px;border-radius:7.6px;background:linear-gradient(#606060,#565656);box-shadow:0 0.8px 1.2px rgba(0,0,0,.45), inset 0 0.8px 0 rgba(255,255,255,.10);"></div><div style="position:absolute;left:1886.80px;top:1011.60px;width:13.20px;height:1.00px;background:#4a4a4a;"></div><svg style="left:1889.90px;top:1004.80px" width="7.00" height="3.80" viewBox="0 0 7 3.8" ><path d="M0.9 2.9 L3.5 0.9 L6.1 2.9" fill="none" stroke="#ececec" stroke-width="1.6" stroke-linecap="round" stroke-linejoin="round"/></svg><svg style="left:1889.90px;top:1015.60px" width="7.00" height="3.80" viewBox="0 0 7 3.8" ><path d="M0.9 0.9 L3.5 2.9 L6.1 0.9" fill="none" stroke="#ececec" stroke-width="1.6" stroke-linecap="round" stroke-linejoin="round"/></svg>
<div style="position:absolute;left:1914.20px;top:1000.90px;width:97.40px;height:22.20px;background:#3a3a3a;box-shadow:inset 0 1px 0 #2c2c2c, inset 0 -1.2px 0 #505050;"></div><span class="t" style="top:1004.85px;font-size:17px;font-weight:400;color:#e8e8e8;letter-spacing:-3.269px;-webkit-text-stroke:0.34px currentColor;left:1999.00px;">1</span>
<div style="position:absolute;left:2014.90px;top:1000.50px;width:15.20px;height:23.20px;border-radius:7.6px;background:linear-gradient(#606060,#565656);box-shadow:0 0.8px 1.2px rgba(0,0,0,.45), inset 0 0.8px 0 rgba(255,255,255,.10);"></div><div style="position:absolute;left:2015.90px;top:1011.60px;width:13.20px;height:1.00px;background:#4a4a4a;"></div><svg style="left:2019.00px;top:1004.80px" width="7.00" height="3.80" viewBox="0 0 7 3.8" ><path d="M0.9 2.9 L3.5 0.9 L6.1 2.9" fill="none" stroke="#ececec" stroke-width="1.6" stroke-linecap="round" stroke-linejoin="round"/></svg><svg style="left:2019.00px;top:1015.60px" width="7.00" height="3.80" viewBox="0 0 7 3.8" ><path d="M0.9 0.9 L3.5 2.9 L6.1 0.9" fill="none" stroke="#ececec" stroke-width="1.6" stroke-linecap="round" stroke-linejoin="round"/></svg>
<span class="t" style="top:1026.23px;font-size:16px;font-weight:400;color:#dedede;letter-spacing:-0.141px;-webkit-text-stroke:0.34px currentColor;left:1814.30px;">Width</span>
<span class="t" style="top:1026.23px;font-size:16px;font-weight:400;color:#dedede;letter-spacing:-0.092px;-webkit-text-stroke:0.34px currentColor;left:1939.55px;">Height</span>
<div style="position:absolute;left:1675.20px;top:1062.20px;width:353.60px;height:1.30px;background:#474747;"></div>
<div style="position:absolute;left:758.00px;top:206.30px;width:195.60px;height:15.50px;background:#262626;border-radius:2.5px;box-shadow:0 0 0 1px #454545;"></div>
<div style="position:absolute;left:833.80px;top:210.60px;width:7.60px;height:7.60px;background:#efb14a;border-radius:50%;"></div>
<div style="position:absolute;left:836.30px;top:213.10px;width:2.60px;height:2.60px;background:#fff;border-radius:0.6px;opacity:.9;"></div>
<div style="position:absolute;left:851.80px;top:210.60px;width:7.60px;height:7.60px;background:#ee8b4c;border-radius:1.8px;"></div>
<div style="position:absolute;left:854.30px;top:213.10px;width:2.60px;height:2.60px;background:#fff;border-radius:0.6px;opacity:.9;"></div>
<div style="position:absolute;left:870.40px;top:210.60px;width:7.60px;height:7.60px;background:#ee8b4c;border-radius:1.8px;"></div>
<div style="position:absolute;left:872.90px;top:213.10px;width:2.60px;height:2.60px;background:#fff;border-radius:0.6px;opacity:.9;"></div>
<div style="position:absolute;left:758.40px;top:227.40px;width:194.80px;height:421.60px;background:rgba(0,0,0,.55);border-radius:25.6px;"></div><div style="position:absolute;left:759.00px;top:228.00px;width:193.60px;height:420.40px;background:#ebebeb;border-radius:25px;"></div><div style="position:absolute;left:825.60px;top:233.80px;width:60.40px;height:17.00px;background:#000;border-radius:8.5px;"></div><div style="position:absolute;left:821.20px;top:642.50px;width:69.20px;height:2.20px;background:#0a0a0a;border-radius:1px;"></div>
<span class="t" style="top:444.81px;font-size:13.6px;font-weight:400;color:#9c9c9c;letter-spacing:0.108px;-webkit-text-stroke:0.35px currentColor;left:799.65px;">Tab Bar Controller</span>
<div style="position:absolute;left:1057.60px;top:206.30px;width:195.60px;height:15.50px;background:#262626;border-radius:2.5px;box-shadow:0 0 0 1px #454545;"></div>
<span class="t" style="top:211.44px;font-size:7.4px;font-weight:700;color:#c4c4c4;letter-spacing:-0.451px;-webkit-text-stroke:0px currentColor;left:1148.50px;">Item</span>
<div style="position:absolute;left:1058.10px;top:227.40px;width:194.60px;height:421.60px;background:rgba(0,0,0,.55);border-radius:25.6px;"></div><div style="position:absolute;left:1058.70px;top:228.00px;width:193.40px;height:420.40px;background:#68c56a;border-radius:25px;"></div><div style="position:absolute;left:1125.20px;top:233.80px;width:60.40px;height:17.00px;background:#000;border-radius:8.5px;"></div><div style="position:absolute;left:1120.80px;top:642.50px;width:69.20px;height:2.20px;background:#0a0a0a;border-radius:1px;"></div>
<div style="position:absolute;left:1130.30px;top:590.80px;width:50.30px;height:30.60px;border-radius:15.3px;background:#a6ecb0;box-shadow:inset 0 0 0 1.3px #c4f6cb, 0 3px 14px rgba(0,50,0,.17);"></div>
<svg style="left:1149.60px;top:594.60px" width="11.40" height="13.40" viewBox="0 0 11.4 13.4" ><path d="M3.4 4.9 H2.2 Q0.8 4.9 0.8 6.3 V11.2 Q0.8 12.6 2.2 12.6 H9.2 Q10.6 12.6 10.6 11.2 V6.3 Q10.6 4.9 9.2 4.9 H8" fill="none" stroke="#3a84ea" stroke-width="1.1" stroke-linecap="round"/><path d="M5.7 8.2 V0.9 M3.5 2.9 L5.7 0.7 L7.9 2.9" fill="none" stroke="#3a84ea" stroke-width="1.1" stroke-linecap="round" stroke-linejoin="round"/></svg>
<span class="t" style="top:611.41px;font-size:4.8px;font-weight:400;color:#4189e6;letter-spacing:0.164px;-webkit-text-stroke:0px currentColor;left:1150.40px;">Item</span>
<div style="position:absolute;left:1057.60px;top:720.50px;width:195.60px;height:15.00px;background:#262626;border-radius:2.5px;box-shadow:0 0 0 1px #454545;"></div>
<span class="t" style="top:725.44px;font-size:7.4px;font-weight:700;color:#c4c4c4;letter-spacing:-0.451px;-webkit-text-stroke:0px currentColor;left:1148.50px;">Item</span>
<div style="position:absolute;left:1058.00px;top:741.20px;width:194.80px;height:422.30px;background:rgba(0,0,0,.55);border-radius:25.6px;"></div><div style="position:absolute;left:1058.60px;top:741.80px;width:193.60px;height:421.10px;background:#eb4e3d;border-radius:25px;"></div><div style="position:absolute;left:1125.20px;top:747.60px;width:60.40px;height:17.00px;background:#000;border-radius:8.5px;"></div><div style="position:absolute;left:1120.80px;top:1157.00px;width:69.20px;height:2.20px;background:#0a0a0a;border-radius:1px;"></div>
<div style="position:absolute;left:1130.40px;top:1105.00px;width:50.30px;height:30.50px;border-radius:15.2px;background:#e9bfb6;box-shadow:inset 0 0 0 1.3px #f7ddd7, 0 3px 14px rgba(70,0,0,.17);"></div>
<div style="position:absolute;left:1149.40px;top:1110.30px;width:11.80px;height:11.80px;border-radius:50%;background:#2a6cf0;"></div>
<svg style="left:1152.30px;top:1112.60px" width="6.00" height="7.00" viewBox="0 0 6 7" ><path d="M1 2.6 H5 V6.2 H1 Z M3 0.6 V3.4" fill="none" stroke="#7ea6f4" stroke-width="0.8"/></svg>
<span class="t" style="top:1126.11px;font-size:4.8px;font-weight:400;color:#3a78ea;letter-spacing:0.164px;-webkit-text-stroke:0px currentColor;left:1150.40px;">Item</span>
<svg style="left:400.00px;top:145.00px" width="1241.00" height="1065.00" viewBox="0 0 1241 1065" ><defs><linearGradient id="fade" x1="0" x2="1" y1="0" y2="0"><stop offset="0" stop-color="#7b7b7b" stop-opacity="0"/><stop offset="0.5" stop-color="#7b7b7b" stop-opacity="1"/></linearGradient></defs><rect x="309" y="292.8" width="47" height="1.4" fill="url(#fade)"/><path d="M347.6 285.2 L356.4 293.5 L347.6 301.8" fill="none" stroke="#7b7b7b" stroke-width="1.4" stroke-linecap="round" stroke-linejoin="round"/><path d="M553 293.5 H598 M612.2 293.5 H656" fill="none" stroke="#7b7b7b" stroke-width="1.4"/><path d="M647.6 285.2 L656.4 293.5 L647.6 301.8" fill="none" stroke="#7b7b7b" stroke-width="1.4" stroke-linecap="round" stroke-linejoin="round"/><circle cx="605.1" cy="293.5" r="6.9" fill="none" stroke="#7b7b7b" stroke-width="1.3"/><path d="M602.9 291.3 L607.3 295.7" stroke="#7b7b7b" stroke-width="1.2"/><circle cx="602.8" cy="291.2" r="1.1" fill="#7b7b7b"/><circle cx="607.4" cy="295.8" r="1.1" fill="#7b7b7b"/><path d="M455.6 504 V534 Q455.6 539.2 460.8 539.2 H598 M612.2 539.2 H750.6 Q755.6 539.2 755.6 544.4 V572" fill="none" stroke="#7b7b7b" stroke-width="1.4"/><path d="M747.4 564.6 L755.6 573 L763.8 564.6" fill="none" stroke="#7b7b7b" stroke-width="1.4" stroke-linecap="round" stroke-linejoin="round"/><circle cx="605.1" cy="539.2" r="6.9" fill="none" stroke="#7b7b7b" stroke-width="1.3"/><path d="M602.9 537 L607.3 541.4" stroke="#7b7b7b" stroke-width="1.2"/><circle cx="602.8" cy="536.9" r="1.1" fill="#7b7b7b"/><circle cx="607.4" cy="541.5" r="1.1" fill="#7b7b7b"/></svg>
<div style="position:absolute;left:1453.00px;top:175.00px;width:177.40px;height:293.40px;border-radius:9px;background:#4c4c4c;box-shadow:inset 0 0 0 1.2px #6e6e6e, 0 0 0 1px rgba(0,0,0,.40), 0 2px 10px rgba(0,0,0,.30);overflow:hidden;"></div>
<div style="position:absolute;left:1454.20px;top:454.40px;width:175.00px;height:12.80px;background:#333333;border-radius:0 0 8px 8px;"></div>
<div style="position:absolute;left:1454.20px;top:453.80px;width:175.00px;height:1.10px;background:#6e6e6e;"></div>
<div style="position:absolute;left:1475.00px;top:197.60px;width:50.30px;height:109.60px;background:#ebebeb;border-radius:6.5px;"></div><div style="position:absolute;left:1492.20px;top:199.20px;width:15.90px;height:4.30px;background:#000;border-radius:2.2px;"></div>
<div style="position:absolute;left:1485.80px;top:254.00px;width:28.80px;height:3.00px;background:repeating-linear-gradient(90deg,#cdcdcd 0 2.2px,#e2e2e2 2.2px 3.1px);opacity:.85;"></div>
<div style="position:absolute;left:1553.30px;top:197.60px;width:50.30px;height:109.60px;background:#68c56a;border-radius:6.5px;"></div><div style="position:absolute;left:1570.50px;top:199.20px;width:15.90px;height:4.30px;background:#000;border-radius:2.2px;"></div>
<div style="position:absolute;left:1571.60px;top:292.00px;width:13.70px;height:8.10px;background:#b4efbb;border-radius:4px;"></div>
<div style="position:absolute;left:1577.60px;top:294.00px;width:1.80px;height:4.00px;background:#4d8de6;border-radius:1px;"></div>
<div style="position:absolute;left:1553.30px;top:331.80px;width:50.30px;height:109.60px;background:#eb4e3d;border-radius:6.5px;"></div><div style="position:absolute;left:1570.50px;top:333.40px;width:15.90px;height:4.30px;background:#000;border-radius:2.2px;"></div>
<div style="position:absolute;left:1571.60px;top:426.20px;width:13.70px;height:8.10px;background:#f3cac3;border-radius:4px;"></div>
<div style="position:absolute;left:1577.10px;top:427.80px;width:2.80px;height:2.80px;background:#2a6cf0;border-radius:50%;"></div>
<div style="position:absolute;left:1577.30px;top:431.60px;width:2.40px;height:0.90px;background:#2a6cf0;"></div>
<div style="position:absolute;left:1646.20px;top:440.20px;width:11.20px;height:468.40px;background:#9b9b9b;border-radius:5.6px;"></div>
<div style="position:absolute;left:680.00px;top:1216.00px;width:714.50px;height:11.00px;background:#9b9b9b;border-radius:5.5px;"></div>
<svg style="left:413.20px;top:1243.00px" width="18.80" height="19.00" viewBox="0 0 20 18.5" preserveAspectRatio="none"><rect x="0.8" y="0.8" width="18.4" height="16.9" rx="3" fill="none" stroke="#b0b0b0" stroke-width="1.5"/><rect x="3" y="3.2" width="4.4" height="12.1" rx="1" fill="#b0b0b0"/></svg>
<svg style="left:446.30px;top:1242.50px" width="20.00" height="20.00" viewBox="0 0 20 20" ><circle cx="10" cy="10" r="9.1" fill="none" stroke="#b0b0b0" stroke-width="1.5"/><circle cx="10" cy="5.2" r="1.5" fill="#b0b0b0"/><path d="M4.9 7.9 H15.1 M10 8 V12 M10 11.6 L7.6 16 M10 11.6 L12.4 16" fill="none" stroke="#b0b0b0" stroke-width="1.6" stroke-linecap="round"/></svg>
<svg style="left:483.50px;top:1242.20px" width="20.60" height="20.60" viewBox="0 0 20.6 20.6" ><circle cx="10.3" cy="10.3" r="9.3" fill="none" stroke="#2f78f0" stroke-width="1.7"/><path d="M10.3 0.6 A9.7 9.7 0 0 1 10.3 20 Z" fill="#2f78f0"/><path d="M10.3 6.4 A3.9 3.9 0 0 1 10.3 14.2 Z" fill="#282828"/><path d="M10.3 6.4 A3.9 3.9 0 0 0 10.3 14.2 Z" fill="#2f78f0"/></svg>
<svg style="left:522.90px;top:1241.40px" width="21.00" height="20.00" viewBox="0 0 21 20" ><rect x="0.9" y="6.6" width="13.6" height="12.6" rx="2" fill="none" stroke="#b0b0b0" stroke-width="1.6"/><path d="M13.2 1.6 Q19.6 1.4 19.4 8" fill="none" stroke="#b0b0b0" stroke-width="1.4" stroke-linecap="round"/><path d="M15.6 -0.6 L13 1.7 L15.6 4" fill="none" stroke="#b0b0b0" stroke-width="1.4" stroke-linecap="round" stroke-linejoin="round"/></svg>
<svg style="left:557.00px;top:1243.50px" width="19.60" height="18.00" viewBox="0 0 19.6 18" ><rect x="0.8" y="0.8" width="18" height="16.4" rx="3" fill="none" stroke="#5c5c5c" stroke-width="1.5"/><path d="M9.8 1 V17" stroke="#5c5c5c" stroke-width="1.5"/></svg>
<svg style="left:599.00px;top:1243.20px" width="12.60" height="19.40" viewBox="0 0 12.6 19.4" ><rect x="0.8" y="0.8" width="11.0" height="17.799999999999997" rx="2.2" fill="none" stroke="#b0b0b0" stroke-width="1.6"/><path d="M4.8 2.6 H7.8" stroke="#b0b0b0" stroke-width="1"/></svg>
<span class="t" style="top:1245.63px;font-size:16px;font-weight:400;color:#cfcfcf;letter-spacing:0.215px;-webkit-text-stroke:0.34px currentColor;left:633.00px;">iPhone 16</span>
<svg style="left:972.40px;top:1241.70px" width="20.00" height="20.00" viewBox="0 0 20 20" ><circle cx="8" cy="8" r="7.5" fill="none" stroke="#b0b0b0" stroke-width="1.5"/><path d="M4.6 8 H11.4" stroke="#b0b0b0" stroke-width="1.5" stroke-linecap="round"/><path d="M13.5 13.5 L19.6 19.6" stroke="#b0b0b0" stroke-width="1.9" stroke-linecap="round"/></svg>
<span class="t" style="top:1245.63px;font-size:16px;font-weight:400;color:#cfcfcf;letter-spacing:0.590px;-webkit-text-stroke:0.34px currentColor;left:1014.00px;">34%</span>
<svg style="left:1068.60px;top:1241.60px" width="20.00" height="20.00" viewBox="0 0 20 20" ><circle cx="8" cy="8" r="7.5" fill="none" stroke="#b0b0b0" stroke-width="1.5"/><path d="M4.6 8 H11.4" stroke="#b0b0b0" stroke-width="1.5" stroke-linecap="round"/><path d="M8 4.6 V11.4" stroke="#b0b0b0" stroke-width="1.5" stroke-linecap="round"/><path d="M13.5 13.5 L19.6 19.6" stroke="#b0b0b0" stroke-width="1.9" stroke-linecap="round"/></svg>
<svg style="left:1470.00px;top:1241.50px" width="22.00" height="22.00" viewBox="0 0 22 22" ><path d="M0.8 5 V0.8 H5 M17 0.8 H21.2 V5 M21.2 17 V21.2 H17 M5 21.2 H0.8 V17" fill="none" stroke="#5c5c5c" stroke-width="1.4"/><path d="M7.5 15.6 A6 6 0 1 0 5.2 9.4" fill="none" stroke="#5c5c5c" stroke-width="1.4" stroke-linecap="round"/><path d="M5 13.2 L7.6 16 L10.6 13.6" fill="none" stroke="#5c5c5c" stroke-width="1.4" stroke-linecap="round" stroke-linejoin="round"/></svg>
<svg style="left:1507.40px;top:1241.50px" width="22.50" height="22.00" viewBox="0 0 22.5 22" ><path d="M1 0 V22" stroke="#b0b0b0" stroke-width="1.6"/><rect x="4.4" y="3.4" width="11.6" height="6" fill="none" stroke="#b0b0b0" stroke-width="1.5"/><rect x="4.4" y="12.6" width="17" height="6" fill="none" stroke="#b0b0b0" stroke-width="1.5"/></svg>
<svg style="left:1544.70px;top:1241.30px" width="23.20" height="22.40" viewBox="0 0 23.2 22.4" ><rect x="7.6" y="7.2" width="8" height="8" fill="none" stroke="#b0b0b0" stroke-width="1.5"/><path d="M11.6 0.8 V5.4 M9 0.8 H14.2 M11.6 17 V21.6 M9 21.6 H14.2 M0.8 11.2 H5.4 M0.8 8.6 V13.8 M17.8 11.2 H22.4 M22.4 8.6 V13.8" fill="none" stroke="#b0b0b0" stroke-width="1.3"/></svg>
<svg style="left:1582.80px;top:1244.10px" width="23.20" height="18.00" viewBox="0 0 23.2 18" ><path d="M11.6 2.6 L18 14.2 H5.2 Z" fill="none" stroke="#b0b0b0" stroke-width="1.5" stroke-linejoin="round"/><circle cx="11.6" cy="10.4" r="1.7" fill="#b0b0b0"/><path d="M0.8 5.8 V13 M0.8 9.4 H4.4 M22.4 5.8 V13 M18.8 9.4 H22.4" fill="none" stroke="#b0b0b0" stroke-width="1.3"/></svg>
<svg style="left:1623.60px;top:1241.60px" width="22.40" height="21.80" viewBox="0 0 22.4 21.8" ><path d="M7.6 3.6 H0.8 V21 H21.6 V3.6 H14.8" fill="none" stroke="#b0b0b0" stroke-width="1.5"/><path d="M11.2 1.8 V14.6 M6.6 10.4 L11.2 15 L15.8 10.4" fill="none" stroke="#b0b0b0" stroke-width="1.5" stroke-linecap="round" stroke-linejoin="round"/></svg>
<svg style="left:30.20px;top:1287.80px" width="21.60" height="13.40" viewBox="0 0 22 13.8" ><path d="M2 0 H17.4 Q18.4 0 19 0.8 L21.6 5.8 Q22.2 6.9 21.6 8 L19 13 Q18.4 13.8 17.4 13.8 H2 Q0 13.8 0 11.8 V2 Q0 0 2 0 Z" fill="#2f7bf6"/></svg>
<svg style="left:1618.80px;top:1284.80px" width="19.60" height="18.60" viewBox="0 0 19.6 18.6" ><rect x="0.8" y="0.8" width="18" height="17" rx="3.2" fill="none" stroke="#b0b0b0" stroke-width="1.5"/><rect x="3.4" y="10.8" width="12.8" height="4.6" rx="0.8" fill="#b0b0b0"/></svg>
</div>
<div style="position:absolute;left:8.00px;top:7.00px;width:2033.00px;height:1307.50px;border-radius:16px;box-shadow:inset 0 0 0 1.2px rgba(255,255,255,.26);pointer-events:none;"></div>
</body></html>
